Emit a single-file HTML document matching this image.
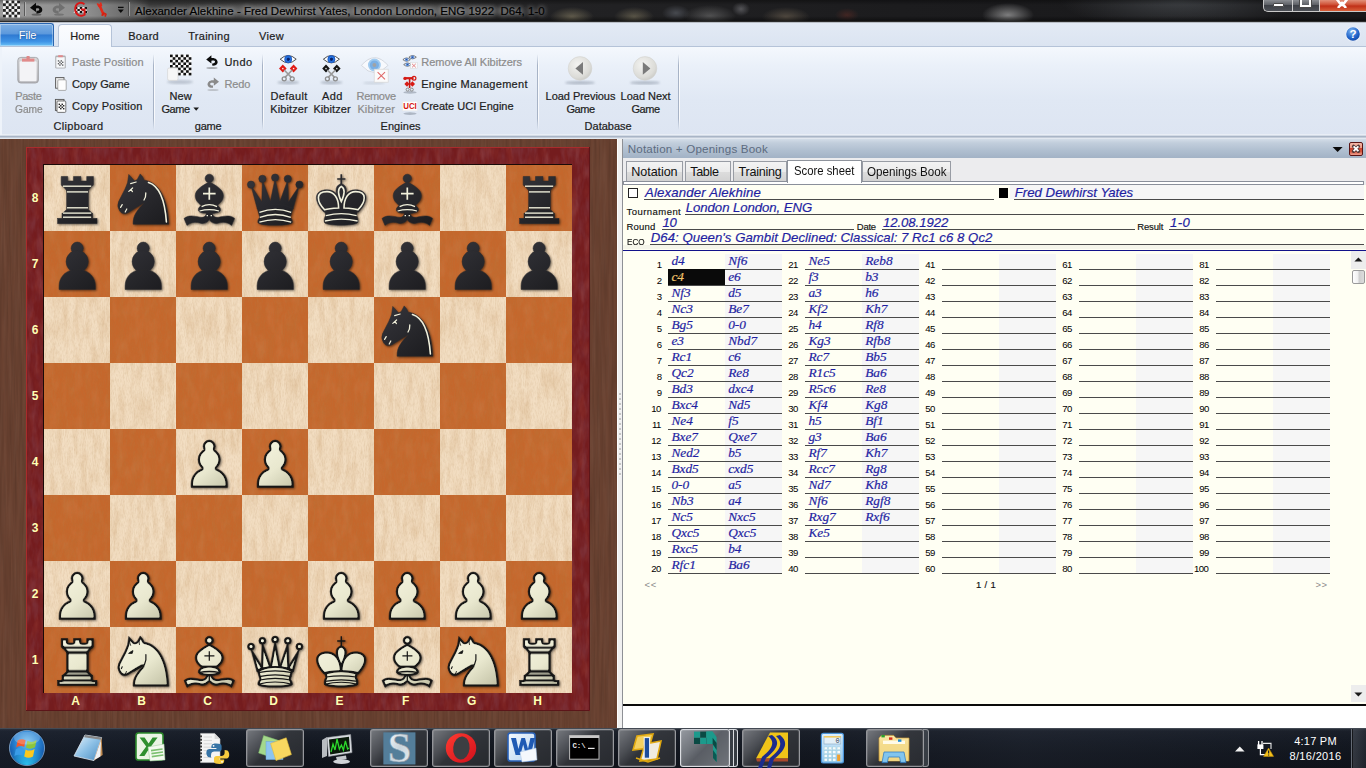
<!DOCTYPE html>
<html><head><meta charset="utf-8"><title>ChessBase</title>
<style>
html,body{margin:0;padding:0;}
body{width:1366px;height:768px;overflow:hidden;position:relative;background:#fff;font-family:"Liberation Sans",sans-serif;}
.t{position:absolute;white-space:pre;}
</style></head><body>
<svg width="0" height="0" style="position:absolute"><defs>
<linearGradient id="wg" gradientUnits="userSpaceOnUse" x1="14" y1="10" x2="54" y2="60"><stop offset="0" stop-color="#f7f6e2"/><stop offset="0.55" stop-color="#e9e8cf"/><stop offset="1" stop-color="#c3c2a6"/></linearGradient>
<linearGradient id="bg" gradientUnits="userSpaceOnUse" x1="14" y1="10" x2="54" y2="60"><stop offset="0" stop-color="#34343a"/><stop offset="1" stop-color="#1c1c1f"/></linearGradient>
<filter id="erode" x="-5%" y="-5%" width="110%" height="110%"><feGaussianBlur in="SourceAlpha" stdDeviation="0.8" result="b"/><feComponentTransfer in="b" result="m"><feFuncA type="linear" slope="10" intercept="-8.9"/></feComponentTransfer><feComposite in="SourceGraphic" in2="m" operator="in"/></filter>
</defs>
<symbol id="bp" viewBox="0 0 66 66"><g fill="url(#bg)" stroke="#2a2a2e" stroke-width="0.5"><circle cx="33.2" cy="17.2" r="6.1"/><circle cx="33.2" cy="30.6" r="11.1"/><path d="M15.1,58.4 L15.1,55 C15.1,46.5 20.6,40.6 28.8,38.7 L37.6,38.7 C45.8,40.6 51.4,46.5 51.4,55 L51.4,58.4 Z"/></g></symbol>
<symbol id="wp" viewBox="0 0 66 66"><g fill="#161616" stroke="#161616" stroke-width="0.5"><circle cx="33.2" cy="17.2" r="6.1"/><circle cx="33.2" cy="30.6" r="11.1"/><path d="M15.1,58.4 L15.1,55 C15.1,46.5 20.6,40.6 28.8,38.7 L37.6,38.7 C45.8,40.6 51.4,46.5 51.4,55 L51.4,58.4 Z"/></g><g filter="url(#erode)"><g fill="url(#wg)"><circle cx="33.2" cy="17.2" r="6.1"/><circle cx="33.2" cy="30.6" r="11.1"/><path d="M15.1,58.4 L15.1,55 C15.1,46.5 20.6,40.6 28.8,38.7 L37.6,38.7 C45.8,40.6 51.4,46.5 51.4,55 L51.4,58.4 Z"/></g></g></symbol>
<symbol id="br" viewBox="0 0 66 66"><g fill="url(#bg)" stroke="#2a2a2e" stroke-width="0.5"><path d="M17.2,11.5 L23.7,11.5 L23.7,16 L29.5,16 L29.5,11.5 L36.9,11.5 L36.9,16 L42.7,16 L42.7,11.5 L49.4,11.5 L49.4,19.5 Q49.4,20.8 48,20.8 L18.6,20.8 Q17.2,20.8 17.2,19.5 Z"/><path d="M18.6,20.8 L48,20.8 L44.3,25.6 L22.7,25.6 Z"/><rect x="22.7" y="25.6" width="21.6" height="18.8"/><path d="M22.7,44.4 L44.3,44.4 L48.3,48.4 L18.4,48.4 Z"/><rect x="18" y="48.4" width="30.6" height="4.9"/><rect x="13.6" y="53.3" width="39.4" height="5.3"/></g><path d="M19,21.2 L47.2,21.2" stroke="#f2f1dc" stroke-width="1.35" fill="none"/><path d="M23,26.9 L44,26.9" stroke="#f2f1dc" stroke-width="1.35" fill="none"/><path d="M23,42.8 L44,42.8" stroke="#f2f1dc" stroke-width="1.35" fill="none"/><path d="M19,48.1 L47.2,48.1" stroke="#f2f1dc" stroke-width="1.35" fill="none"/><path d="M19,52.2 L47.2,52.2" stroke="#f2f1dc" stroke-width="1.35" fill="none"/></symbol>
<symbol id="wr" viewBox="0 0 66 66"><g fill="#161616" stroke="#161616" stroke-width="0.5"><path d="M17.2,11.5 L23.7,11.5 L23.7,16 L29.5,16 L29.5,11.5 L36.9,11.5 L36.9,16 L42.7,16 L42.7,11.5 L49.4,11.5 L49.4,19.5 Q49.4,20.8 48,20.8 L18.6,20.8 Q17.2,20.8 17.2,19.5 Z"/><path d="M18.6,20.8 L48,20.8 L44.3,25.6 L22.7,25.6 Z"/><rect x="22.7" y="25.6" width="21.6" height="18.8"/><path d="M22.7,44.4 L44.3,44.4 L48.3,48.4 L18.4,48.4 Z"/><rect x="18" y="48.4" width="30.6" height="4.9"/><rect x="13.6" y="53.3" width="39.4" height="5.3"/></g><g filter="url(#erode)"><g fill="url(#wg)"><path d="M17.2,11.5 L23.7,11.5 L23.7,16 L29.5,16 L29.5,11.5 L36.9,11.5 L36.9,16 L42.7,16 L42.7,11.5 L49.4,11.5 L49.4,19.5 Q49.4,20.8 48,20.8 L18.6,20.8 Q17.2,20.8 17.2,19.5 Z"/><path d="M18.6,20.8 L48,20.8 L44.3,25.6 L22.7,25.6 Z"/><rect x="22.7" y="25.6" width="21.6" height="18.8"/><path d="M22.7,44.4 L44.3,44.4 L48.3,48.4 L18.4,48.4 Z"/><rect x="18" y="48.4" width="30.6" height="4.9"/><rect x="13.6" y="53.3" width="39.4" height="5.3"/></g></g><path d="M18,20.8 L48.6,20.8" stroke="#161616" stroke-width="1.2" fill="none"/><path d="M22.7,25.6 L44.3,25.6" stroke="#161616" stroke-width="1.2" fill="none"/><path d="M22.7,44.4 L44.3,44.4" stroke="#161616" stroke-width="1.2" fill="none"/><path d="M18.4,48.4 L48.3,48.4" stroke="#161616" stroke-width="1.2" fill="none"/><path d="M17,53.3 L49.6,53.3" stroke="#161616" stroke-width="1.2" fill="none"/></symbol>
<symbol id="bn" viewBox="0 0 66 66"><g fill="url(#bg)" stroke="#2a2a2e" stroke-width="0.5"><path d="M18.8,9.4 L24.4,15.8 Q26,15.4 27.2,14.6 L30.2,8.9 Q33,11.6 34.2,15.2 C45,16.3 57.8,28 58.8,59.2 L23.1,59.2 C22.7,50 28,44.2 34.4,37.8 C30,40.6 23,44.6 18,47.8 Q12.5,50.6 9.6,45.8 Q6.6,41.4 8.6,36.6 L14.8,24.4 Q16.6,20.4 17.6,17.6 Z"/></g><path d="M38.5,17.6 C47.5,20.4 54.6,32 56.4,57" stroke="#f2f1dc" fill="none" stroke-linecap="round" stroke-width="1.6"/><path d="M20.6,18.6 L26.2,17" stroke="#f2f1dc" fill="none" stroke-linecap="round" stroke-width="1.1"/><path d="M18.8,26.4 L22.6,23 M21,24.4 L22.4,26.6" stroke="#f2f1dc" fill="none" stroke-linecap="round" stroke-width="1.2"/><path d="M35.8,28 Q36,32 34,35" stroke="#f2f1dc" fill="none" stroke-linecap="round" stroke-width="1.3"/><path d="M10.6,42.4 L12.2,39.6" stroke="#f2f1dc" fill="none" stroke-linecap="round" stroke-width="1.2"/><path d="M15.2,47 L16.8,44" stroke="#f2f1dc" fill="none" stroke-linecap="round" stroke-width="1.2"/></symbol>
<symbol id="wn" viewBox="0 0 66 66"><g fill="#161616" stroke="#161616" stroke-width="0.5"><path d="M18.8,9.4 L24.4,15.8 Q26,15.4 27.2,14.6 L30.2,8.9 Q33,11.6 34.2,15.2 C45,16.3 57.8,28 58.8,59.2 L23.1,59.2 C22.7,50 28,44.2 34.4,37.8 C30,40.6 23,44.6 18,47.8 Q12.5,50.6 9.6,45.8 Q6.6,41.4 8.6,36.6 L14.8,24.4 Q16.6,20.4 17.6,17.6 Z"/></g><g filter="url(#erode)"><g fill="url(#wg)"><path d="M18.8,9.4 L24.4,15.8 Q26,15.4 27.2,14.6 L30.2,8.9 Q33,11.6 34.2,15.2 C45,16.3 57.8,28 58.8,59.2 L23.1,59.2 C22.7,50 28,44.2 34.4,37.8 C30,40.6 23,44.6 18,47.8 Q12.5,50.6 9.6,45.8 Q6.6,41.4 8.6,36.6 L14.8,24.4 Q16.6,20.4 17.6,17.6 Z"/></g></g><path d="M19.6,12.6 Q19.4,16 20.6,18.4 M29.6,12 Q28.6,15 29.4,17.6" stroke="#161616" fill="none" stroke-linecap="round" stroke-width="0.8"/><path d="M18.6,26.4 Q20.6,24.6 23,23.6 L22.2,26.4 Z" fill="#161616" stroke="#161616" stroke-width="0.8"/><path d="M35.9,27.6 Q36.6,33 34.4,37.8 C30,40.6 27,42 24,44" stroke="#161616" fill="none" stroke-linecap="round" stroke-width="1.2"/><path d="M11.4,41.6 L12.2,39.8" stroke="#161616" fill="none" stroke-linecap="round" stroke-width="1.1"/><path d="M15.4,46.6 Q16.2,45.6 16.4,44.6" stroke="#161616" fill="none" stroke-linecap="round" stroke-width="1"/></symbol>
<symbol id="bb" viewBox="0 0 66 66"><g fill="url(#bg)" stroke="#2a2a2e" stroke-width="0.5"><circle cx="33.3" cy="13.4" r="4.2"/><path d="M33.3,16.8 C28,20 19.2,24 19.2,30.6 C19.2,35 22,38 25.4,40.6 L41.2,40.6 C44.6,38 47.4,35 47.4,30.6 C47.4,24 38.6,20 33.3,16.8 Z"/><path d="M22.3,44.8 C22.3,36.8 44.5,36.8 44.5,44.8 C45,50 21.8,50 22.3,44.8 Z"/><path d="M8,53.4 C13,49.4 19,51.4 24,52.2 C28,52.7 30.2,51.4 30.6,47.6 L36,47.6 C36.4,51.4 38.6,52.7 42.6,52.2 C47.6,51.4 53.6,49.4 58.6,53.4 L55.6,60.4 C50,56.2 46,57.2 42,58.2 C38,59 35,57.6 33.3,54.6 C31.6,57.6 28.6,59 24.6,58.2 C20.6,57.2 16.6,56.2 11,60.4 Z"/></g><path d="M33.3,22.6 L33.3,34.8 M27,28.7 L39.6,28.7" stroke="#f2f1dc" fill="none" stroke-width="1.7"/><path d="M25.6,41.6 Q33.3,37.6 41,41.6" stroke="#f2f1dc" fill="none" stroke-width="1.2"/><path d="M23.6,46 Q33.3,43.4 43,46" stroke="#f2f1dc" fill="none" stroke-width="1.2"/><path d="M30.6,50.6 L32,50.6 M34.6,50.6 L36,50.6" stroke="#f2f1dc" fill="none" stroke-width="1.2"/></symbol>
<symbol id="wb" viewBox="0 0 66 66"><g fill="#161616" stroke="#161616" stroke-width="0.5"><circle cx="33.3" cy="13.4" r="4.2"/><path d="M33.3,16.8 C28,20 19.2,24 19.2,30.6 C19.2,35 22,38 25.4,40.6 L41.2,40.6 C44.6,38 47.4,35 47.4,30.6 C47.4,24 38.6,20 33.3,16.8 Z"/><path d="M8,53.4 C13,49.4 19,51.4 24,52.2 C28,52.7 30.2,51.4 30.6,47.6 L36,47.6 C36.4,51.4 38.6,52.7 42.6,52.2 C47.6,51.4 53.6,49.4 58.6,53.4 L55.6,60.4 C50,56.2 46,57.2 42,58.2 C38,59 35,57.6 33.3,54.6 C31.6,57.6 28.6,59 24.6,58.2 C20.6,57.2 16.6,56.2 11,60.4 Z"/><path d="M22.3,44.8 C22.3,36.8 44.5,36.8 44.5,44.8 C45,50 21.8,50 22.3,44.8 Z"/></g><g filter="url(#erode)"><g fill="url(#wg)"><circle cx="33.3" cy="13.4" r="4.2"/></g></g><g filter="url(#erode)"><g fill="url(#wg)"><path d="M33.3,16.8 C28,20 19.2,24 19.2,30.6 C19.2,35 22,38 25.4,40.6 L41.2,40.6 C44.6,38 47.4,35 47.4,30.6 C47.4,24 38.6,20 33.3,16.8 Z"/></g></g><g filter="url(#erode)"><g fill="url(#wg)"><path d="M8,53.4 C13,49.4 19,51.4 24,52.2 C28,52.7 30.2,51.4 30.6,47.6 L36,47.6 C36.4,51.4 38.6,52.7 42.6,52.2 C47.6,51.4 53.6,49.4 58.6,53.4 L55.6,60.4 C50,56.2 46,57.2 42,58.2 C38,59 35,57.6 33.3,54.6 C31.6,57.6 28.6,59 24.6,58.2 C20.6,57.2 16.6,56.2 11,60.4 Z"/></g></g><g filter="url(#erode)"><g fill="url(#wg)"><path d="M22.3,44.8 C22.3,36.8 44.5,36.8 44.5,44.8 C45,50 21.8,50 22.3,44.8 Z"/></g></g><path d="M33.3,24.2 L33.3,33.8 M28.4,28.8 L38.4,28.8" stroke="#161616" fill="none" stroke-width="1.2"/><path d="M22.8,45.6 Q33.3,43.4 43.8,45.6" stroke="#161616" fill="none" stroke-width="1.25"/><path d="M33.3,49 L33.3,55" stroke="#161616" fill="none" stroke-width="1.3"/></symbol>
<symbol id="bq" viewBox="0 0 66 66"><g fill="url(#bg)" stroke="#2a2a2e" stroke-width="0.5"><path d="M15.3,44 L9,20.5 L19.8,36.8 L20.4,15 L28.4,36.2 L33.1,13.6 L37.9,36.2 L45.8,15 L46.5,36.8 L57.4,20.5 L51.1,44 Z"/><path d="M15.3,43.4 Q33.1,34.8 51.1,43.4 L50.2,46 L48.4,52.4 C49.6,53.6 50.6,55.4 50.3,57.4 C49.6,61.2 16.6,61.2 15.9,57.4 C15.6,55.4 16.6,53.6 17.8,52.4 L16,46 Z"/><circle cx="9.0" cy="19.6" r="3.6"/><circle cx="20.4" cy="13.8" r="3.6"/><circle cx="33.1" cy="12.6" r="3.6"/><circle cx="45.8" cy="13.8" r="3.6"/><circle cx="57.4" cy="19.6" r="3.6"/></g><path d="M17.4,47.4 Q33.3,41.4 49.2,47.4" stroke="#f2f1dc" fill="none" stroke-width="1.3"/><path d="M17.8,52.4 Q33.3,46.6 48.8,52.4" stroke="#f2f1dc" fill="none" stroke-width="1.3"/><path d="M17.4,57.2 Q33.3,52 49.2,57.2" stroke="#f2f1dc" fill="none" stroke-width="1.3"/></symbol>
<symbol id="wq" viewBox="0 0 66 66"><g fill="#161616" stroke="#161616" stroke-width="0.5"><path d="M8.4,20.5 L15,45 L21.4,41.4 Z"/><path d="M20.1,14.4 L19.2,42.6 L29.4,41 Z"/><path d="M33.1,12.8 L27.8,41.4 L38.6,41.4 Z"/><path d="M46.1,14.4 L37,41 L47.2,42.6 Z"/><path d="M58,20.5 L45,41.4 L51.4,45 Z"/><path d="M15.3,43.4 Q33.1,34.8 51.1,43.4 L50.2,46 L48.4,52.4 C49.6,53.6 50.6,55.4 50.3,57.4 C49.6,61.2 16.6,61.2 15.9,57.4 C15.6,55.4 16.6,53.6 17.8,52.4 L16,46 Z"/><circle cx="9.0" cy="19.6" r="3.5"/><circle cx="20.4" cy="13.8" r="3.5"/><circle cx="33.1" cy="12.6" r="3.5"/><circle cx="45.8" cy="13.8" r="3.5"/><circle cx="57.4" cy="19.6" r="3.5"/></g><g filter="url(#erode)"><g fill="url(#wg)"><path d="M8.4,20.5 L15,45 L21.4,41.4 Z"/></g></g><g filter="url(#erode)"><g fill="url(#wg)"><path d="M20.1,14.4 L19.2,42.6 L29.4,41 Z"/></g></g><g filter="url(#erode)"><g fill="url(#wg)"><path d="M33.1,12.8 L27.8,41.4 L38.6,41.4 Z"/></g></g><g filter="url(#erode)"><g fill="url(#wg)"><path d="M46.1,14.4 L37,41 L47.2,42.6 Z"/></g></g><g filter="url(#erode)"><g fill="url(#wg)"><path d="M58,20.5 L45,41.4 L51.4,45 Z"/></g></g><g filter="url(#erode)"><g fill="url(#wg)"><path d="M15.3,43.4 Q33.1,34.8 51.1,43.4 L50.2,46 L48.4,52.4 C49.6,53.6 50.6,55.4 50.3,57.4 C49.6,61.2 16.6,61.2 15.9,57.4 C15.6,55.4 16.6,53.6 17.8,52.4 L16,46 Z"/></g></g><g filter="url(#erode)"><g fill="url(#wg)"><circle cx="9.0" cy="19.6" r="3.5"/></g></g><g filter="url(#erode)"><g fill="url(#wg)"><circle cx="20.4" cy="13.8" r="3.5"/></g></g><g filter="url(#erode)"><g fill="url(#wg)"><circle cx="33.1" cy="12.6" r="3.5"/></g></g><g filter="url(#erode)"><g fill="url(#wg)"><circle cx="45.8" cy="13.8" r="3.5"/></g></g><g filter="url(#erode)"><g fill="url(#wg)"><circle cx="57.4" cy="19.6" r="3.5"/></g></g><path d="M15.4,43.8 Q33.1,35.4 51,43.8" stroke="#161616" fill="none" stroke-width="1.3"/><path d="M16.2,45.6 Q33.1,42 50.2,45.6" stroke="#161616" fill="none" stroke-width="1.25"/><path d="M17.2,49.6 Q33.1,46 49.2,49.6" stroke="#161616" fill="none" stroke-width="1.25"/><path d="M17.8,53 Q33.1,49.8 48.6,53" stroke="#161616" fill="none" stroke-width="1.25"/><path d="M16,57.4 Q33.1,52.6 50.2,57.4" stroke="#161616" fill="none" stroke-width="1.1"/></symbol>
<symbol id="bk" viewBox="0 0 66 66"><g fill="url(#bg)" stroke="#2a2a2e" stroke-width="0.5"><path d="M33.8,45 C24,45.2 18.6,46.2 16,47.2 C10.6,41.8 8.4,36.4 8.4,32.6 C8.4,27.4 13,24.8 19,24.8 C27.6,24.8 33.8,32 33.8,45 Z"/><path d="M32.6,45 C42.4,45.2 47.8,46.2 50.4,47.2 C55.8,41.8 58,36.4 58,32.6 C58,27.4 53.4,24.8 47.4,24.8 C38.8,24.8 32.6,32 32.6,45 Z"/><path d="M33.2,18.6 C25.6,21 27,29 33.2,40.4 C39.4,29 40.8,21 33.2,18.6 Z"/><path d="M16.6,45.8 Q33.1,40.6 49.8,45.8 L48.4,50.4 C49.8,52 50.4,55 49.9,57.2 C49.2,61.2 17,61.2 16.3,57.2 C15.8,55 16.4,52 17.8,50.4 Z"/></g><path d="M33.3,9.2 L33.3,19 M29.2,14 L37.4,14" stroke="#2a2a2e" stroke-width="1.7" fill="none"/><path d="M30.6,43 C23,43.4 19,44 16.6,44.8 C12.4,40.6 10.4,36 10.4,32.8 C10.4,28.6 14,26.6 19,26.6 C26,26.6 30.6,33 30.6,43 Z" stroke="#f2f1dc" fill="none" stroke-width="1.6"/><path d="M36,43 C43.6,43.4 47.6,44 50,44.8 C54.2,40.6 56.2,36 56.2,32.8 C56.2,28.6 52.6,26.6 47.6,26.6 C40.6,26.6 36,33 36,43 Z" stroke="#f2f1dc" fill="none" stroke-width="1.6"/><path d="M33.3,21.4 C29.4,23.6 29.6,28.6 33.3,36.6 C37,28.6 37.2,23.6 33.3,21.4 Z" stroke="#f2f1dc" fill="none" stroke-width="1.6"/><path d="M18,50.6 Q33.3,46.6 48.6,50.6" stroke="#f2f1dc" fill="none" stroke-width="1.3"/><path d="M17,56 Q33.3,52.4 49.6,56" stroke="#f2f1dc" fill="none" stroke-width="1.3"/></symbol>
<symbol id="wk" viewBox="0 0 66 66"><g fill="#161616" stroke="#161616" stroke-width="0.5"><path d="M33.8,45 C24,45.2 18.6,46.2 16,47.2 C10.6,41.8 8.4,36.4 8.4,32.6 C8.4,27.4 13,24.8 19,24.8 C27.6,24.8 33.8,32 33.8,45 Z"/><path d="M32.6,45 C42.4,45.2 47.8,46.2 50.4,47.2 C55.8,41.8 58,36.4 58,32.6 C58,27.4 53.4,24.8 47.4,24.8 C38.8,24.8 32.6,32 32.6,45 Z"/><path d="M33.2,18.6 C25.6,21 27,29 33.2,40.4 C39.4,29 40.8,21 33.2,18.6 Z"/><path d="M16.6,45.8 Q33.1,40.6 49.8,45.8 L48.4,50.4 C49.8,52 50.4,55 49.9,57.2 C49.2,61.2 17,61.2 16.3,57.2 C15.8,55 16.4,52 17.8,50.4 Z"/></g><g filter="url(#erode)"><g fill="url(#wg)"><path d="M33.8,45 C24,45.2 18.6,46.2 16,47.2 C10.6,41.8 8.4,36.4 8.4,32.6 C8.4,27.4 13,24.8 19,24.8 C27.6,24.8 33.8,32 33.8,45 Z"/></g></g><g filter="url(#erode)"><g fill="url(#wg)"><path d="M32.6,45 C42.4,45.2 47.8,46.2 50.4,47.2 C55.8,41.8 58,36.4 58,32.6 C58,27.4 53.4,24.8 47.4,24.8 C38.8,24.8 32.6,32 32.6,45 Z"/></g></g><g filter="url(#erode)"><g fill="url(#wg)"><path d="M33.2,18.6 C25.6,21 27,29 33.2,40.4 C39.4,29 40.8,21 33.2,18.6 Z"/></g></g><g filter="url(#erode)"><g fill="url(#wg)"><path d="M16.6,45.8 Q33.1,40.6 49.8,45.8 L48.4,50.4 C49.8,52 50.4,55 49.9,57.2 C49.2,61.2 17,61.2 16.3,57.2 C15.8,55 16.4,52 17.8,50.4 Z"/></g></g><path d="M33.3,9.2 L33.3,19 M29.2,14 L37.4,14" stroke="#161616" fill="none" stroke-width="1.4"/><path d="M18,50 Q33.1,47.8 48.2,50" stroke="#161616" fill="none" stroke-width="1.25"/><path d="M17,54.4 Q33.1,51.2 49.4,54.4" stroke="#161616" fill="none" stroke-width="1.25"/><path d="M16.4,57.4 Q33.1,53 49.8,57.4" stroke="#161616" fill="none" stroke-width="1.1"/><path d="M33.1,38 L33.1,43.4" stroke="#161616" fill="none" stroke-width="1.3"/></symbol>
</svg>
<svg width="617" height="589" style="position:absolute;left:0;top:139px">
<defs>
<filter id="fwood" x="0" y="0" width="100%" height="100%"><feTurbulence type="fractalNoise" baseFrequency="0.35 0.012" numOctaves="3" seed="7"/><feColorMatrix type="matrix" values="0 0 0 0 0  0 0 0 0 0  0 0 0 0 0  1.6 0 0 0 -0.55"/></filter>
<filter id="fwoodl" x="0" y="0" width="100%" height="100%"><feTurbulence type="fractalNoise" baseFrequency="0.3 0.015" numOctaves="2" seed="11"/><feColorMatrix type="matrix" values="0 0 0 0 1  0 0 0 0 0.9  0 0 0 0 0.8  1.5 0 0 0 -0.6"/></filter>
<filter id="fred" x="0" y="0" width="100%" height="100%"><feTurbulence type="fractalNoise" baseFrequency="0.16 0.05" numOctaves="3" seed="5"/><feColorMatrix type="matrix" values="0 0 0 0 0.2  0 0 0 0 0.03  0 0 0 0 0.04  2.2 0 0 0 -0.78"/></filter>
<filter id="fredl" x="0" y="0" width="100%" height="100%"><feTurbulence type="fractalNoise" baseFrequency="0.14 0.05" numOctaves="3" seed="9"/><feColorMatrix type="matrix" values="0 0 0 0 0.8  0 0 0 0 0.22  0 0 0 0 0.12  2.2 0 0 0 -0.95"/></filter>
<filter id="fsq" x="0" y="0" width="100%" height="100%"><feTurbulence type="fractalNoise" baseFrequency="0.16 0.035" numOctaves="3" seed="2"/><feColorMatrix type="matrix" values="0 0 0 0 0.45  0 0 0 0 0.2  0 0 0 0 0.05  1.2 0 0 0 -0.45"/></filter>
<filter id="fsql" x="0" y="0" width="100%" height="100%"><feTurbulence type="fractalNoise" baseFrequency="0.12 0.05" numOctaves="3" seed="4"/><feColorMatrix type="matrix" values="0 0 0 0 1  0 0 0 0 0.95  0 0 0 0 0.85  1.2 0 0 0 -0.5"/></filter>
<filter id="ffine" x="0" y="0" width="100%" height="100%"><feTurbulence type="fractalNoise" baseFrequency="0.9 0.25" numOctaves="2" seed="8"/><feColorMatrix type="matrix" values="0 0 0 0 0.4  0 0 0 0 0.22  0 0 0 0 0.08  1.4 0 0 0 -0.55"/></filter>
</defs>
<rect width="617" height="589" fill="#6a4231"/>
<rect width="617" height="589" filter="url(#fwood)" opacity="0.15"/>
<rect width="617" height="589" filter="url(#fwoodl)" opacity="0.06"/>
<rect x="26" y="8" width="564" height="564" fill="#741c1e"/>
<rect x="26" y="8" width="564" height="564" filter="url(#fred)" opacity="0.85"/>
<rect x="26" y="8" width="564" height="564" filter="url(#fredl)" opacity="0.14"/>
<rect x="26.5" y="8.5" width="563" height="563" fill="none" stroke="#a82c2c" stroke-width="1"/>
<path d="M26,571.5 L589.5,571.5 L589.5,8" fill="none" stroke="#5c1519" stroke-width="1"/>
<rect x="43" y="25" width="529" height="529" fill="#1a0a08"/>
<rect x="44" y="26" width="528" height="528" fill="#f2ddc1"/>
<rect x="110" y="26" width="66" height="66" fill="#c5672c"/>
<rect x="242" y="26" width="66" height="66" fill="#c5672c"/>
<rect x="374" y="26" width="66" height="66" fill="#c5672c"/>
<rect x="506" y="26" width="66" height="66" fill="#c5672c"/>
<rect x="44" y="92" width="66" height="66" fill="#c5672c"/>
<rect x="176" y="92" width="66" height="66" fill="#c5672c"/>
<rect x="308" y="92" width="66" height="66" fill="#c5672c"/>
<rect x="440" y="92" width="66" height="66" fill="#c5672c"/>
<rect x="110" y="158" width="66" height="66" fill="#c5672c"/>
<rect x="242" y="158" width="66" height="66" fill="#c5672c"/>
<rect x="374" y="158" width="66" height="66" fill="#c5672c"/>
<rect x="506" y="158" width="66" height="66" fill="#c5672c"/>
<rect x="44" y="224" width="66" height="66" fill="#c5672c"/>
<rect x="176" y="224" width="66" height="66" fill="#c5672c"/>
<rect x="308" y="224" width="66" height="66" fill="#c5672c"/>
<rect x="440" y="224" width="66" height="66" fill="#c5672c"/>
<rect x="110" y="290" width="66" height="66" fill="#c5672c"/>
<rect x="242" y="290" width="66" height="66" fill="#c5672c"/>
<rect x="374" y="290" width="66" height="66" fill="#c5672c"/>
<rect x="506" y="290" width="66" height="66" fill="#c5672c"/>
<rect x="44" y="356" width="66" height="66" fill="#c5672c"/>
<rect x="176" y="356" width="66" height="66" fill="#c5672c"/>
<rect x="308" y="356" width="66" height="66" fill="#c5672c"/>
<rect x="440" y="356" width="66" height="66" fill="#c5672c"/>
<rect x="110" y="422" width="66" height="66" fill="#c5672c"/>
<rect x="242" y="422" width="66" height="66" fill="#c5672c"/>
<rect x="374" y="422" width="66" height="66" fill="#c5672c"/>
<rect x="506" y="422" width="66" height="66" fill="#c5672c"/>
<rect x="44" y="488" width="66" height="66" fill="#c5672c"/>
<rect x="176" y="488" width="66" height="66" fill="#c5672c"/>
<rect x="308" y="488" width="66" height="66" fill="#c5672c"/>
<rect x="440" y="488" width="66" height="66" fill="#c5672c"/>
<rect x="44" y="26" width="528" height="528" filter="url(#fsq)" opacity="0.34"/>
<rect x="44" y="26" width="528" height="528" filter="url(#fsql)" opacity="0.1"/>
<rect x="44" y="26" width="528" height="528" filter="url(#ffine)" opacity="0.22"/>
</svg>
<div class="t" style="left:31.66px;top:192.44px;font:bold 12px Liberation Sans;line-height:12px;color:#ffffb4;">8</div>
<div class="t" style="left:31.66px;top:258.44px;font:bold 12px Liberation Sans;line-height:12px;color:#ffffb4;">7</div>
<div class="t" style="left:31.66px;top:324.44px;font:bold 12px Liberation Sans;line-height:12px;color:#ffffb4;">6</div>
<div class="t" style="left:31.66px;top:390.44px;font:bold 12px Liberation Sans;line-height:12px;color:#ffffb4;">5</div>
<div class="t" style="left:31.66px;top:456.44px;font:bold 12px Liberation Sans;line-height:12px;color:#ffffb4;">4</div>
<div class="t" style="left:31.66px;top:522.44px;font:bold 12px Liberation Sans;line-height:12px;color:#ffffb4;">3</div>
<div class="t" style="left:31.66px;top:588.44px;font:bold 12px Liberation Sans;line-height:12px;color:#ffffb4;">2</div>
<div class="t" style="left:31.66px;top:654.44px;font:bold 12px Liberation Sans;line-height:12px;color:#ffffb4;">1</div>
<div class="t" style="left:71.27px;top:694.84px;font:bold 12px Liberation Sans;line-height:12px;color:#ffffb4;">A</div>
<div class="t" style="left:137.27px;top:694.84px;font:bold 12px Liberation Sans;line-height:12px;color:#ffffb4;">B</div>
<div class="t" style="left:203.27px;top:694.84px;font:bold 12px Liberation Sans;line-height:12px;color:#ffffb4;">C</div>
<div class="t" style="left:269.27px;top:694.84px;font:bold 12px Liberation Sans;line-height:12px;color:#ffffb4;">D</div>
<div class="t" style="left:335.60px;top:694.84px;font:bold 12px Liberation Sans;line-height:12px;color:#ffffb4;">E</div>
<div class="t" style="left:401.93px;top:694.84px;font:bold 12px Liberation Sans;line-height:12px;color:#ffffb4;">F</div>
<div class="t" style="left:466.93px;top:694.84px;font:bold 12px Liberation Sans;line-height:12px;color:#ffffb4;">G</div>
<div class="t" style="left:533.27px;top:694.84px;font:bold 12px Liberation Sans;line-height:12px;color:#ffffb4;">H</div>
<svg width="528" height="528" style="position:absolute;left:44px;top:165px;filter:drop-shadow(1.6px 1.6px 0.8px rgba(0,0,0,0.55))">
<use href="#br" x="0" y="0" width="66" height="66"/>
<use href="#bn" x="66" y="0" width="66" height="66"/>
<use href="#bb" x="132" y="0" width="66" height="66"/>
<use href="#bq" x="198" y="0" width="66" height="66"/>
<use href="#bk" x="264" y="0" width="66" height="66"/>
<use href="#bb" x="330" y="0" width="66" height="66"/>
<use href="#br" x="462" y="0" width="66" height="66"/>
<use href="#bp" x="0" y="66" width="66" height="66"/>
<use href="#bp" x="66" y="66" width="66" height="66"/>
<use href="#bp" x="132" y="66" width="66" height="66"/>
<use href="#bp" x="198" y="66" width="66" height="66"/>
<use href="#bp" x="264" y="66" width="66" height="66"/>
<use href="#bp" x="330" y="66" width="66" height="66"/>
<use href="#bp" x="396" y="66" width="66" height="66"/>
<use href="#bp" x="462" y="66" width="66" height="66"/>
<use href="#bn" x="330" y="132" width="66" height="66"/>
<use href="#wp" x="132" y="264" width="66" height="66"/>
<use href="#wp" x="198" y="264" width="66" height="66"/>
<use href="#wp" x="0" y="396" width="66" height="66"/>
<use href="#wp" x="66" y="396" width="66" height="66"/>
<use href="#wp" x="264" y="396" width="66" height="66"/>
<use href="#wp" x="330" y="396" width="66" height="66"/>
<use href="#wp" x="396" y="396" width="66" height="66"/>
<use href="#wp" x="462" y="396" width="66" height="66"/>
<use href="#wr" x="0" y="462" width="66" height="66"/>
<use href="#wn" x="66" y="462" width="66" height="66"/>
<use href="#wb" x="132" y="462" width="66" height="66"/>
<use href="#wq" x="198" y="462" width="66" height="66"/>
<use href="#wk" x="264" y="462" width="66" height="66"/>
<use href="#wb" x="330" y="462" width="66" height="66"/>
<use href="#wn" x="396" y="462" width="66" height="66"/>
<use href="#wr" x="462" y="462" width="66" height="66"/>
</svg>
<div style="position:absolute;left:0px;top:0px;width:1366px;height:22px;background:radial-gradient(ellipse 22px 10px at 572px 17px, rgba(150,140,110,0.55), rgba(0,0,0,0) 100%),radial-gradient(ellipse 20px 10px at 634px 17px, rgba(150,140,110,0.5), rgba(0,0,0,0) 100%),radial-gradient(ellipse 14px 8px at 676px 13px, rgba(110,115,125,0.5), rgba(0,0,0,0) 100%),radial-gradient(ellipse 26px 11px at 710px 16px, rgba(120,120,120,0.55), rgba(0,0,0,0) 100%),radial-gradient(ellipse 9px 7px at 741px 9px, rgba(120,120,125,0.6), rgba(0,0,0,0) 100%),radial-gradient(ellipse 24px 10px at 786px 17px, rgba(130,115,95,0.5), rgba(0,0,0,0) 100%),radial-gradient(ellipse 12px 7px at 847px 15px, rgba(120,50,40,0.4), rgba(0,0,0,0) 100%),radial-gradient(ellipse 26px 12px at 1008px 15px, rgba(190,190,190,0.6), rgba(0,0,0,0) 100%),radial-gradient(ellipse 120px 30px at 1180px 0px, rgba(90,95,100,0.55), rgba(0,0,0,0) 100%),linear-gradient(90deg,#9c9c9c 0px,#8c8c8c 90px,#6a6a6a 128px,#3a3a3a 150px,#2a2a2a 400px,#222224 560px,#1c1c1e 900px,#18181a 1366px);"></div>
<div style="position:absolute;left:0px;top:0px;width:1366px;height:22px;background:linear-gradient(180deg,rgba(0,0,0,0.35) 0px,rgba(0,0,0,0) 5px,rgba(0,0,0,0) 16px,rgba(0,0,0,0.45) 21px,rgba(0,0,0,0.6) 22px);"></div>
<div style="position:absolute;left:0px;top:21px;width:1366px;height:1px;background:#2c2c2c;"></div>
<div style="position:absolute;left:0px;top:22px;width:1366px;height:1px;background:#b9bec6;"></div>
<div style="position:absolute;left:132px;top:3px;width:418px;height:16px;background:radial-gradient(ellipse 50% 50% at 50% 50%, rgba(190,190,190,0.42) 0%, rgba(175,175,175,0.36) 70%, rgba(150,150,150,0) 100%);filter:blur(2px);"></div>
<div class="t" style="left:135.00px;top:5.67px;font:11.5px Liberation Sans;line-height:11.5px;color:#000;letter-spacing:0.013px;text-shadow:0 0 4px rgba(255,255,255,0.55),0 0 7px rgba(255,255,255,0.4);-webkit-text-stroke:0.2px;">Alexander Alekhine - Fred Dewhirst Yates, London London, ENG 1922  D64, 1-0</div>
<svg width="132" height="22" style="position:absolute;left:0;top:0"><rect x="3" y="0.5" width="17" height="17" fill="#f4f4f4"/><rect x="5.83" y="0.50" width="2.83" height="2.83" fill="#222"/><rect x="11.49" y="0.50" width="2.83" height="2.83" fill="#222"/><rect x="17.15" y="0.50" width="2.83" height="2.83" fill="#222"/><rect x="3.00" y="3.33" width="2.83" height="2.83" fill="#222"/><rect x="8.66" y="3.33" width="2.83" height="2.83" fill="#222"/><rect x="14.32" y="3.33" width="2.83" height="2.83" fill="#222"/><rect x="5.83" y="6.16" width="2.83" height="2.83" fill="#222"/><rect x="11.49" y="6.16" width="2.83" height="2.83" fill="#222"/><rect x="17.15" y="6.16" width="2.83" height="2.83" fill="#222"/><rect x="3.00" y="8.99" width="2.83" height="2.83" fill="#222"/><rect x="8.66" y="8.99" width="2.83" height="2.83" fill="#222"/><rect x="14.32" y="8.99" width="2.83" height="2.83" fill="#222"/><rect x="5.83" y="11.82" width="2.83" height="2.83" fill="#222"/><rect x="11.49" y="11.82" width="2.83" height="2.83" fill="#222"/><rect x="17.15" y="11.82" width="2.83" height="2.83" fill="#222"/><rect x="3.00" y="14.65" width="2.83" height="2.83" fill="#222"/><rect x="8.66" y="14.65" width="2.83" height="2.83" fill="#222"/><rect x="14.32" y="14.65" width="2.83" height="2.83" fill="#222"/><path d="M24.5,2 L24.5,16" stroke="#5a5a5a" stroke-width="1"/><path d="M25.5,2 L25.5,16" stroke="#c8c8c8" stroke-width="1" opacity="0.6"/><path d="M30,7.8 L36,2.8 L36,5.6 C40.6,5.2 42.8,8 42.2,10.8 C41.6,13 39,13.6 36.4,13.4 L36.4,10.8 C38.4,10.9 39.4,10.4 39.2,9.2 C39,8.2 37.6,8.2 36,8.6 L36,12 Z" fill="#0a0a0a"/><ellipse cx="36.5" cy="14.6" rx="5" ry="1.2" fill="#000" opacity="0.35"/><path d="M65,7.8 L59,2.8 L59,5.6 C54.4,5.2 52.2,8 52.8,10.8 C53.4,13 56,13.6 58.6,13.4 L58.6,10.8 C56.6,10.9 55.6,10.4 55.8,9.2 C56,8.2 57.4,8.2 59,8.6 L59,12 Z" fill="#707070"/><ellipse cx="59" cy="14.6" rx="5" ry="1.2" fill="#000" opacity="0.2"/><path d="M73.5,12.8 L77,7 L85,7 L87.6,12.8 Z" fill="#f2f2f2"/><rect x="75.0" y="7.0" width="2.4" height="2" fill="#111"/><rect x="75.0" y="11.0" width="2.4" height="2" fill="#111"/><rect x="77.4" y="9.0" width="2.4" height="2" fill="#111"/><rect x="79.8" y="7.0" width="2.4" height="2" fill="#111"/><rect x="79.8" y="11.0" width="2.4" height="2" fill="#111"/><rect x="82.2" y="9.0" width="2.4" height="2" fill="#111"/><rect x="84.6" y="7.0" width="2.4" height="2" fill="#111"/><rect x="84.6" y="11.0" width="2.4" height="2" fill="#111"/><path d="M84.4,4.4 C82,1.6 76.6,2.2 75.4,7.4 C74.4,12.6 78,16.8 82.6,15.6 L84.6,14.6 L84.6,9.6 L80.8,9.6" fill="none" stroke="#d81818" stroke-width="2"/><path d="M99.6,5.4 L103.4,14.2" fill="none" stroke="#e22a1a" stroke-width="2.6" stroke-linecap="round"/><path d="M97.4,3.4 L99,6.4 L101.4,5.4 L100.4,2.4" fill="none" stroke="#e22a1a" stroke-width="1.7" stroke-linejoin="round"/><path d="M101.8,15.8 L103.6,13 L106,14.2 L105,16.6" fill="none" stroke="#d42010" stroke-width="1.6" stroke-linejoin="round"/><path d="M118,7.4 L123.6,7.4" stroke="#0a0a0a" stroke-width="1.3"/><path d="M117.8,9.6 L123.8,9.6 L120.8,13 Z" fill="#0a0a0a"/><path d="M128.5,2 L128.5,16" stroke="#4a4a4a" stroke-width="1"/><path d="M129.5,2 L129.5,16" stroke="#b8b8b8" stroke-width="1" opacity="0.6"/></svg>
<div style="position:absolute;left:1263px;top:0px;width:103px;height:12px;border:1px solid #c9c9c9;border-top:none;border-right:none;border-radius:0 0 0 5px;background:linear-gradient(180deg,#8a8d92 0%,#5b5e64 45%,#3e4147 50%,#4e5157 100%);box-sizing:border-box;"></div>
<div style="position:absolute;left:1292px;top:0px;width:1px;height:11px;background:#d0d0d0;"></div>
<div style="position:absolute;left:1319px;top:0px;width:1px;height:11px;background:#d0d0d0;"></div>
<div style="position:absolute;left:1320px;top:0px;width:46px;height:11px;background:linear-gradient(180deg,#e2907a 0%,#d0553a 40%,#c03018 55%,#d8603a 100%);"></div>
<div style="position:absolute;left:1273px;top:3px;width:11px;height:4px;background:#fff;border:1px solid #4a4a4a;box-sizing:border-box;border-radius:1px;"></div>
<div style="position:absolute;left:1300px;top:0px;width:11px;height:7px;border:2px solid #fff;border-top:none;box-sizing:border-box;outline:1px solid #4a4a4a;"></div>
<svg width="16" height="8" style="position:absolute;left:1334px;top:0"><path d="M2,-2 L8,6 M14,-2 L8,6 M4,8 L8,3 L12,8" stroke="#fff" stroke-width="2.6" fill="none"/></svg>
<div style="position:absolute;left:0px;top:23px;width:1366px;height:24px;background:linear-gradient(180deg,#e3eaf5 0%,#dbe4f1 100%);"></div>
<div style="position:absolute;left:0px;top:46px;width:1366px;height:1px;background:#b5c3d8;"></div>
<div style="position:absolute;left:0px;top:47px;width:1366px;height:88px;background:linear-gradient(180deg,#f4f8fd 0%,#eaf0f9 22%,#e0e8f4 60%,#dde5f2 100%);"></div>
<div style="position:absolute;left:0px;top:134px;width:1366px;height:1px;background:#e9eef6;"></div>
<div style="position:absolute;left:0px;top:135px;width:1366px;height:1px;background:#d3dbe6;"></div>
<div style="position:absolute;left:0px;top:136px;width:1366px;height:1px;background:#a9b5c6;"></div>
<div style="position:absolute;left:0px;top:137px;width:1366px;height:1px;background:#c3ccd9;"></div>
<div style="position:absolute;left:0px;top:138px;width:1366px;height:1px;background:#e2e8f0;"></div>
<div style="position:absolute;left:0px;top:47px;width:2px;height:88px;background:#eef3fa;"></div>
<div style="position:absolute;left:0px;top:23px;width:54px;height:23px;border-radius:0 3px 0 0;background:linear-gradient(180deg,#7fb0e4 0%,#5b98dc 45%,#2f7ad2 50%,#3f94e6 80%,#6cc2f6 100%);border:1px solid #2a66b0;border-left:none;border-bottom:none;box-sizing:border-box;box-shadow:inset 0 0 0 1px rgba(255,255,255,0.35);"></div>
<div class="t" style="left:18.70px;top:30.09px;font:11px Liberation Sans;line-height:11px;color:#fff;letter-spacing:0.019px;text-shadow:0 0 2px rgba(20,60,120,0.8);">File</div>
<div style="position:absolute;left:58px;top:24px;width:54px;height:23px;background:linear-gradient(180deg,#fbfcfe 0%,#f4f8fd 100%);border:1px solid #b5c3d8;border-bottom:none;border-radius:4px 4px 0 0;box-sizing:border-box;"></div>
<div class="t" style="left:70.20px;top:30.79px;font:11px Liberation Sans;line-height:11px;color:#1e1e1e;letter-spacing:0.064px;-webkit-text-stroke:0.22px;">Home</div>
<div class="t" style="left:128.20px;top:30.79px;font:11px Liberation Sans;line-height:11px;color:#1e1e1e;letter-spacing:0.289px;-webkit-text-stroke:0.22px;">Board</div>
<div class="t" style="left:188.20px;top:30.79px;font:11px Liberation Sans;line-height:11px;color:#1e1e1e;letter-spacing:0.283px;-webkit-text-stroke:0.22px;">Training</div>
<div class="t" style="left:259.00px;top:30.79px;font:11px Liberation Sans;line-height:11px;color:#1e1e1e;letter-spacing:0.339px;-webkit-text-stroke:0.22px;">View</div>
<svg width="18" height="18" style="position:absolute;left:1344px;top:25px"><defs><radialGradient id="hg" cx="0.4" cy="0.3" r="0.8"><stop offset="0" stop-color="#7db4f0"/><stop offset="0.6" stop-color="#1f62c8"/><stop offset="1" stop-color="#0d3c96"/></radialGradient></defs><circle cx="9" cy="9" r="7.4" fill="url(#hg)" stroke="#e8eef8" stroke-width="1.2"/><text x="9" y="13.2" font-family="Liberation Sans" font-weight="bold" font-size="11.5" fill="#fff" text-anchor="middle">?</text></svg>
<div style="position:absolute;left:153px;top:54px;width:1px;height:76px;background:linear-gradient(180deg,rgba(160,172,190,0) 0%,#a7b3c6 15%,#a7b3c6 85%,rgba(160,172,190,0) 100%);"></div>
<div style="position:absolute;left:154px;top:54px;width:1px;height:76px;background:linear-gradient(180deg,rgba(255,255,255,0) 0%,rgba(255,255,255,0.8) 15%,rgba(255,255,255,0.8) 85%,rgba(255,255,255,0) 100%);"></div>
<div style="position:absolute;left:262px;top:54px;width:1px;height:76px;background:linear-gradient(180deg,rgba(160,172,190,0) 0%,#a7b3c6 15%,#a7b3c6 85%,rgba(160,172,190,0) 100%);"></div>
<div style="position:absolute;left:263px;top:54px;width:1px;height:76px;background:linear-gradient(180deg,rgba(255,255,255,0) 0%,rgba(255,255,255,0.8) 15%,rgba(255,255,255,0.8) 85%,rgba(255,255,255,0) 100%);"></div>
<div style="position:absolute;left:537px;top:54px;width:1px;height:76px;background:linear-gradient(180deg,rgba(160,172,190,0) 0%,#a7b3c6 15%,#a7b3c6 85%,rgba(160,172,190,0) 100%);"></div>
<div style="position:absolute;left:538px;top:54px;width:1px;height:76px;background:linear-gradient(180deg,rgba(255,255,255,0) 0%,rgba(255,255,255,0.8) 15%,rgba(255,255,255,0.8) 85%,rgba(255,255,255,0) 100%);"></div>
<div style="position:absolute;left:678px;top:54px;width:1px;height:76px;background:linear-gradient(180deg,rgba(160,172,190,0) 0%,#a7b3c6 15%,#a7b3c6 85%,rgba(160,172,190,0) 100%);"></div>
<div style="position:absolute;left:679px;top:54px;width:1px;height:76px;background:linear-gradient(180deg,rgba(255,255,255,0) 0%,rgba(255,255,255,0.8) 15%,rgba(255,255,255,0.8) 85%,rgba(255,255,255,0) 100%);"></div>
<div class="t" style="left:15.20px;top:90.79px;font:11px Liberation Sans;line-height:11px;color:#8c8c8c;letter-spacing:-0.386px;-webkit-text-stroke:0.22px;">Paste</div>
<div class="t" style="left:14.70px;top:103.89px;font:11px Liberation Sans;line-height:11px;color:#8c8c8c;transform:scaleX(0.9281);transform-origin:0 0;-webkit-text-stroke:0.22px;">Game</div>
<div class="t" style="left:72.00px;top:56.69px;font:11px Liberation Sans;line-height:11px;color:#8c8c8c;letter-spacing:0.106px;-webkit-text-stroke:0.22px;">Paste Position</div>
<div class="t" style="left:72.00px;top:78.89px;font:11px Liberation Sans;line-height:11px;color:#1e1e1e;letter-spacing:-0.121px;-webkit-text-stroke:0.22px;">Copy Game</div>
<div class="t" style="left:72.00px;top:100.79px;font:11px Liberation Sans;line-height:11px;color:#1e1e1e;letter-spacing:0.210px;-webkit-text-stroke:0.22px;">Copy Position</div>
<div class="t" style="left:53.50px;top:120.79px;font:11px Liberation Sans;line-height:11px;color:#1e1e1e;letter-spacing:0.324px;-webkit-text-stroke:0.22px;">Clipboard</div>
<div class="t" style="left:169.40px;top:90.79px;font:11px Liberation Sans;line-height:11px;color:#1e1e1e;letter-spacing:0.198px;-webkit-text-stroke:0.22px;">New</div>
<div class="t" style="left:161.50px;top:103.89px;font:11px Liberation Sans;line-height:11px;color:#1e1e1e;letter-spacing:-0.439px;-webkit-text-stroke:0.22px;">Game</div>
<svg width="7" height="5" style="position:absolute;left:192.5px;top:107px"><path d="M0.4,0.4 L6,0.4 L3.2,3.8 Z" fill="#1a1a1a"/></svg>
<div class="t" style="left:224.40px;top:56.69px;font:11px Liberation Sans;line-height:11px;color:#1e1e1e;letter-spacing:0.476px;-webkit-text-stroke:0.22px;">Undo</div>
<div class="t" style="left:224.40px;top:78.89px;font:11px Liberation Sans;line-height:11px;color:#8c8c8c;letter-spacing:-0.124px;-webkit-text-stroke:0.22px;">Redo</div>
<div class="t" style="left:194.70px;top:120.79px;font:11px Liberation Sans;line-height:11px;color:#1e1e1e;letter-spacing:-0.179px;-webkit-text-stroke:0.22px;">game</div>
<div class="t" style="left:270.40px;top:90.79px;font:11px Liberation Sans;line-height:11px;color:#1e1e1e;letter-spacing:0.364px;-webkit-text-stroke:0.22px;">Default</div>
<div class="t" style="left:270.20px;top:103.89px;font:11px Liberation Sans;line-height:11px;color:#1e1e1e;letter-spacing:0.115px;-webkit-text-stroke:0.22px;">Kibitzer</div>
<div class="t" style="left:322.00px;top:90.79px;font:11px Liberation Sans;line-height:11px;color:#1e1e1e;letter-spacing:0.343px;-webkit-text-stroke:0.22px;">Add</div>
<div class="t" style="left:313.40px;top:103.89px;font:11px Liberation Sans;line-height:11px;color:#1e1e1e;letter-spacing:0.090px;-webkit-text-stroke:0.22px;">Kibitzer</div>
<div class="t" style="left:356.50px;top:90.79px;font:11px Liberation Sans;line-height:11px;color:#8c8c8c;letter-spacing:-0.293px;-webkit-text-stroke:0.22px;">Remove</div>
<div class="t" style="left:357.40px;top:103.89px;font:11px Liberation Sans;line-height:11px;color:#8c8c8c;letter-spacing:0.115px;-webkit-text-stroke:0.22px;">Kibitzer</div>
<div class="t" style="left:421.20px;top:56.69px;font:11px Liberation Sans;line-height:11px;color:#8c8c8c;letter-spacing:-0.004px;-webkit-text-stroke:0.22px;">Remove All Kibitzers</div>
<div class="t" style="left:421.20px;top:78.89px;font:11px Liberation Sans;line-height:11px;color:#1e1e1e;letter-spacing:0.299px;-webkit-text-stroke:0.22px;">Engine Management</div>
<div class="t" style="left:421.20px;top:100.79px;font:11px Liberation Sans;line-height:11px;color:#1e1e1e;letter-spacing:0.004px;-webkit-text-stroke:0.22px;">Create UCI Engine</div>
<div class="t" style="left:380.60px;top:120.79px;font:11px Liberation Sans;line-height:11px;color:#1e1e1e;letter-spacing:0.036px;-webkit-text-stroke:0.22px;">Engines</div>
<div class="t" style="left:545.60px;top:90.79px;font:11px Liberation Sans;line-height:11px;color:#1e1e1e;letter-spacing:-0.040px;-webkit-text-stroke:0.22px;">Load Previous</div>
<div class="t" style="left:566.40px;top:103.89px;font:11px Liberation Sans;line-height:11px;color:#1e1e1e;letter-spacing:-0.439px;-webkit-text-stroke:0.22px;">Game</div>
<div class="t" style="left:620.60px;top:90.79px;font:11px Liberation Sans;line-height:11px;color:#1e1e1e;letter-spacing:-0.016px;-webkit-text-stroke:0.22px;">Load Next</div>
<div class="t" style="left:631.40px;top:103.89px;font:11px Liberation Sans;line-height:11px;color:#1e1e1e;letter-spacing:-0.439px;-webkit-text-stroke:0.22px;">Game</div>
<div class="t" style="left:584.60px;top:120.79px;font:11px Liberation Sans;line-height:11px;color:#1e1e1e;letter-spacing:-0.011px;-webkit-text-stroke:0.22px;">Database</div>
<svg width="700" height="92" style="position:absolute;left:0;top:47px"><defs>
<linearGradient id="clipg" x1="0" y1="0" x2="0" y2="1"><stop offset="0" stop-color="#d8d8da"/><stop offset="1" stop-color="#b4b4b8"/></linearGradient>
<radialGradient id="btn" cx="0.4" cy="0.35" r="0.75"><stop offset="0" stop-color="#f4f4f2"/><stop offset="0.7" stop-color="#dcdcd8"/><stop offset="1" stop-color="#c4c4c0"/></radialGradient>
<radialGradient id="eyeb" cx="0.5" cy="0.5" r="0.5"><stop offset="0" stop-color="#0a1a50"/><stop offset="0.35" stop-color="#0a2a80"/><stop offset="0.5" stop-color="#2a78e0"/><stop offset="1" stop-color="#1858c8"/></radialGradient>
<filter id="soft"><feGaussianBlur stdDeviation="1.2"/></filter>
</defs><rect x="17.8" y="10.399999999999999" width="20.6" height="25.6" rx="3" fill="url(#clipg)" stroke="#9a9a9e" stroke-width="0.8"/><rect x="19.6" y="14.200000000000003" width="17" height="20" rx="1.2" fill="#f3f3f6"/><rect x="22" y="11.600000000000001" width="12.4" height="3" fill="#e28a8a"/><rect x="26.4" y="9" width="3.4" height="3.2" rx="1" fill="#d88"/><g opacity="0.75"><rect x="55.2" y="8.600000000000001" width="10.6" height="13" rx="1.4" fill="#9a9a9c"/><rect x="56.300000000000004" y="10.200000000000003" width="8.4" height="10.4" fill="#fbfbfb"/><rect x="58.2" y="8.200000000000003" width="4.6" height="2" fill="#d66"/><g fill="#333"><rect x="57.8" y="13.2" width="1.4" height="1.4" opacity="1"/><rect x="57.8" y="14.6" width="1.4" height="1.4" opacity="0"/><rect x="57.8" y="16.0" width="1.4" height="1.4" opacity="1"/><rect x="57.8" y="17.4" width="1.4" height="1.4" opacity="0"/><rect x="59.2" y="13.2" width="1.4" height="1.4" opacity="0"/><rect x="59.2" y="14.6" width="1.4" height="1.4" opacity="1"/><rect x="59.2" y="16.0" width="1.4" height="1.4" opacity="0"/><rect x="59.2" y="17.4" width="1.4" height="1.4" opacity="1"/><rect x="60.6" y="13.2" width="1.4" height="1.4" opacity="1"/><rect x="60.6" y="14.6" width="1.4" height="1.4" opacity="0"/><rect x="60.6" y="16.0" width="1.4" height="1.4" opacity="1"/><rect x="60.6" y="17.4" width="1.4" height="1.4" opacity="0"/><rect x="62.0" y="13.2" width="1.4" height="1.4" opacity="0"/><rect x="62.0" y="14.6" width="1.4" height="1.4" opacity="1"/><rect x="62.0" y="16.0" width="1.4" height="1.4" opacity="0"/><rect x="62.0" y="17.4" width="1.4" height="1.4" opacity="1"/></g></g><rect x="55.6" y="30.599999999999994" width="8.4" height="10.6" fill="#e8e8e8" stroke="#555" stroke-width="0.9"/><rect x="57.8" y="32.8" width="8.4" height="10.6" rx="1" fill="#fdfdfd" stroke="#8c8c8c" stroke-width="0.7"/><rect x="55.4" y="52.400000000000006" width="8.6" height="11" fill="#ddd" stroke="#555" stroke-width="0.9"/><rect x="57" y="54" width="8.8" height="11.4" rx="1" fill="#fdfdfd" stroke="#555" stroke-width="0.8"/><g fill="#222"><rect x="58.60" y="56.60" width="1.45" height="1.45" opacity="1"/><rect x="58.60" y="58.05" width="1.45" height="1.45" opacity="0"/><rect x="58.60" y="59.50" width="1.45" height="1.45" opacity="1"/><rect x="58.60" y="60.95" width="1.45" height="1.45" opacity="0"/><rect x="60.05" y="56.60" width="1.45" height="1.45" opacity="0"/><rect x="60.05" y="58.05" width="1.45" height="1.45" opacity="1"/><rect x="60.05" y="59.50" width="1.45" height="1.45" opacity="0"/><rect x="60.05" y="60.95" width="1.45" height="1.45" opacity="1"/><rect x="61.50" y="56.60" width="1.45" height="1.45" opacity="1"/><rect x="61.50" y="58.05" width="1.45" height="1.45" opacity="0"/><rect x="61.50" y="59.50" width="1.45" height="1.45" opacity="1"/><rect x="61.50" y="60.95" width="1.45" height="1.45" opacity="0"/><rect x="62.95" y="56.60" width="1.45" height="1.45" opacity="0"/><rect x="62.95" y="58.05" width="1.45" height="1.45" opacity="1"/><rect x="62.95" y="59.50" width="1.45" height="1.45" opacity="0"/><rect x="62.95" y="60.95" width="1.45" height="1.45" opacity="1"/></g><ellipse cx="180" cy="35" rx="13" ry="2" fill="#8a94a4" opacity="0.45" filter="url(#soft)"/><rect x="170" y="7.600000000000001" width="21.4" height="20.8" fill="#fbfbfb"/><g fill="#111"><rect x="170.00" y="7.60" width="2.67" height="2.60"/><rect x="170.00" y="12.80" width="2.67" height="2.60"/><rect x="170.00" y="18.00" width="2.67" height="2.60"/><rect x="170.00" y="23.20" width="2.67" height="2.60"/><rect x="172.68" y="10.20" width="2.67" height="2.60"/><rect x="172.68" y="15.40" width="2.67" height="2.60"/><rect x="172.68" y="20.60" width="2.67" height="2.60"/><rect x="172.68" y="25.80" width="2.67" height="2.60"/><rect x="175.35" y="7.60" width="2.67" height="2.60"/><rect x="175.35" y="12.80" width="2.67" height="2.60"/><rect x="175.35" y="18.00" width="2.67" height="2.60"/><rect x="175.35" y="23.20" width="2.67" height="2.60"/><rect x="178.03" y="10.20" width="2.67" height="2.60"/><rect x="178.03" y="15.40" width="2.67" height="2.60"/><rect x="178.03" y="20.60" width="2.67" height="2.60"/><rect x="178.03" y="25.80" width="2.67" height="2.60"/><rect x="180.70" y="7.60" width="2.67" height="2.60"/><rect x="180.70" y="12.80" width="2.67" height="2.60"/><rect x="180.70" y="18.00" width="2.67" height="2.60"/><rect x="180.70" y="23.20" width="2.67" height="2.60"/><rect x="183.38" y="10.20" width="2.67" height="2.60"/><rect x="183.38" y="15.40" width="2.67" height="2.60"/><rect x="183.38" y="20.60" width="2.67" height="2.60"/><rect x="183.38" y="25.80" width="2.67" height="2.60"/><rect x="186.05" y="7.60" width="2.67" height="2.60"/><rect x="186.05" y="12.80" width="2.67" height="2.60"/><rect x="186.05" y="18.00" width="2.67" height="2.60"/><rect x="186.05" y="23.20" width="2.67" height="2.60"/><rect x="188.72" y="10.20" width="2.67" height="2.60"/><rect x="188.72" y="15.40" width="2.67" height="2.60"/><rect x="188.72" y="20.60" width="2.67" height="2.60"/><rect x="188.72" y="25.80" width="2.67" height="2.60"/></g><rect x="167.6" y="21" width="10.4" height="12.4" rx="1.6" fill="#f6f6f6" stroke="#d0d0d0" stroke-width="0.6"/><path d="M0,4.4 L5.2,0 L5.2,2.8 C9.4,2.4 11.8,4.8 11.4,7.6 C11,9.8 8.6,10.6 6,10.4 L6,8.2 C8,8.3 9,7.6 8.8,6.4 C8.6,5.2 7,5.2 5.2,5.6 L5.2,8.4 Z" transform="translate(206.2,8.200000000000003)" fill="#0c0c0c"/><ellipse cx="212" cy="21" rx="5.6" ry="1.1" fill="#555" opacity="0.45"/><path d="M0,4.4 L5.2,0 L5.2,2.8 C9.4,2.4 11.8,4.8 11.4,7.6 C11,9.8 8.6,10.6 6,10.4 L6,8.2 C8,8.3 9,7.6 8.8,6.4 C8.6,5.2 7,5.2 5.2,5.6 L5.2,8.4 Z" transform="translate(219.0,30.400000000000006) scale(-1,1)" fill="#8a8a8a"/><ellipse cx="213" cy="43" rx="5.6" ry="1.1" fill="#777" opacity="0.35"/><ellipse cx="288.2" cy="35.599999999999994" rx="11" ry="1.8" fill="#7d8796" opacity="0.45" filter="url(#soft)"/><g opacity="1"><path d="M280.2,12.200000000000003 Q288.2,4.800000000000004 296.2,12.200000000000003 Q288.2,19.60000000000001 280.2,12.200000000000003 Z" fill="#fff" stroke="#222" stroke-width="0.8"/><circle cx="288.2" cy="12.200000000000003" r="3.85" fill="url(#eyeb)"/></g><path d="M282.8,17.599999999999994 L286.6,21.599999999999994 L282.8,25.599999999999994 L279.0,21.599999999999994 Z" fill="#e01a14"/><rect x="282.1" y="20.900000000000006" width="1.4" height="1.4" fill="#fff" opacity="0.9"/><path d="M293.59999999999997,17.599999999999994 L297.4,21.599999999999994 L293.59999999999997,25.599999999999994 L289.79999999999995,21.599999999999994 Z" fill="#e01a14"/><rect x="292.9" y="20.900000000000006" width="1.4" height="1.4" fill="#fff" opacity="0.9"/><path d="M284.2,23 L291.59999999999997,30.599999999999994 M292.2,23 L284.8,30.599999999999994" stroke="#9a9a9a" stroke-width="1.6"/><circle cx="284.2" cy="31.799999999999997" r="2" fill="none" stroke="#8e8e8e" stroke-width="1.3"/><circle cx="292.2" cy="31.799999999999997" r="2" fill="none" stroke="#8e8e8e" stroke-width="1.3"/><ellipse cx="331.4" cy="35.599999999999994" rx="11" ry="1.8" fill="#7d8796" opacity="0.45" filter="url(#soft)"/><g opacity="1"><path d="M323.4,12.200000000000003 Q331.4,4.800000000000004 339.4,12.200000000000003 Q331.4,19.60000000000001 323.4,12.200000000000003 Z" fill="#fff" stroke="#222" stroke-width="0.8"/><circle cx="331.4" cy="12.200000000000003" r="3.85" fill="url(#eyeb)"/></g><path d="M326.0,17.599999999999994 L329.8,21.599999999999994 L326.0,25.599999999999994 L322.2,21.599999999999994 Z" fill="#141414"/><rect x="325.3" y="20.900000000000006" width="1.4" height="1.4" fill="#fff" opacity="0.9"/><path d="M336.79999999999995,17.599999999999994 L340.59999999999997,21.599999999999994 L336.79999999999995,25.599999999999994 L332.99999999999994,21.599999999999994 Z" fill="#141414"/><rect x="336.09999999999997" y="20.900000000000006" width="1.4" height="1.4" fill="#fff" opacity="0.9"/><path d="M327.4,23 L334.79999999999995,30.599999999999994 M335.4,23 L328.0,30.599999999999994" stroke="#9a9a9a" stroke-width="1.6"/><circle cx="327.4" cy="31.799999999999997" r="2" fill="none" stroke="#8e8e8e" stroke-width="1.3"/><circle cx="335.4" cy="31.799999999999997" r="2" fill="none" stroke="#8e8e8e" stroke-width="1.3"/><ellipse cx="374" cy="36" rx="11" ry="1.6" fill="#9aa4b2" opacity="0.3" filter="url(#soft)"/><g opacity="0.8"><path d="M361.4,18.400000000000006 Q374.6,3 388,18.400000000000006 Q374.6,33 361.4,18.400000000000006 Z" fill="#fbfcfe" stroke="#c4c8d0" stroke-width="0.8"/><circle cx="374.4" cy="18" r="6.4" fill="#8fc2ee"/><circle cx="374.4" cy="18" r="4.6" fill="#5fa0e0"/><circle cx="374.4" cy="18" r="2" fill="#909090"/></g><rect x="374.2" y="22.200000000000003" width="14" height="13" fill="#fbfbfb" stroke="#d6d6d6" stroke-width="0.7"/><path d="M377.6,25.200000000000003 L385,32.400000000000006 M385,25.200000000000003 L377.6,32.400000000000006" stroke="#e06a6a" stroke-width="1.1"/><g opacity="0.75"><g opacity="1"><path d="M402.90000000000003,12.600000000000001 Q406.6,9.399999999999999 410.3,12.600000000000001 Q406.6,15.800000000000004 402.90000000000003,12.600000000000001 Z" fill="#fff" stroke="#222" stroke-width="0.8"/><circle cx="406.6" cy="12.600000000000001" r="1.66" fill="url(#eyeb)"/></g><g opacity="1"><path d="M408.90000000000003,10.200000000000003 Q412.6,7.0 416.3,10.200000000000003 Q412.6,13.400000000000006 408.90000000000003,10.200000000000003 Z" fill="#fff" stroke="#222" stroke-width="0.8"/><circle cx="412.6" cy="10.200000000000003" r="1.66" fill="url(#eyeb)"/></g><g opacity="1"><path d="M403.7,17.599999999999994 Q407.4,14.399999999999991 411.09999999999997,17.599999999999994 Q407.4,20.799999999999997 403.7,17.599999999999994 Z" fill="#fff" stroke="#222" stroke-width="0.8"/><circle cx="407.4" cy="17.599999999999994" r="1.66" fill="url(#eyeb)"/></g><rect x="410.6" y="15.399999999999999" width="6.6" height="6.2" fill="#fff" stroke="#ccc" stroke-width="0.5"/><path d="M412,16.799999999999997 L415.8,20.400000000000006 M415.8,16.799999999999997 L412,20.400000000000006" stroke="#e05050" stroke-width="0.9"/></g><ellipse cx="410" cy="45.400000000000006" rx="6.6" ry="1.3" fill="#7d8796" opacity="0.5"/><path d="M404.8,31.200000000000003 L413.6,31.200000000000003" stroke="#d41a14" stroke-width="2.2"/><circle cx="405" cy="31.400000000000006" r="1.7" fill="#d41a14"/><circle cx="414" cy="31.200000000000003" r="1.9" fill="none" stroke="#d41a14" stroke-width="1.2"/><path d="M409.6,32 L409.6,41" stroke="#c01814" stroke-width="1.6"/><path d="M407.0,34.2 L409.6,37 L407.0,39.8 L404.4,37 Z" fill="#d81a14"/><path d="M412.40000000000003,34.2 L415.00000000000006,37 L412.40000000000003,39.8 L409.8,37 Z" fill="#d81a14"/><circle cx="407.6" cy="42.599999999999994" r="1.5" fill="none" stroke="#8a8a8a" stroke-width="1"/><circle cx="411.8" cy="42.599999999999994" r="1.5" fill="none" stroke="#8a8a8a" stroke-width="1"/><ellipse cx="410" cy="66.6" rx="6.6" ry="1.3" fill="#7d8796" opacity="0.5"/><rect x="402.6" y="54.400000000000006" width="14.8" height="9.4" fill="#fdfdfd" stroke="#e6e6e6" stroke-width="0.5"/><text x="410" y="62.400000000000006" font-family="Liberation Sans" font-weight="bold" font-size="8.6" fill="#d8140e" text-anchor="middle" textLength="13.6" lengthAdjust="spacingAndGlyphs">UCI</text><ellipse cx="580" cy="35.8" rx="15" ry="1.8" fill="#8a94a4" opacity="0.55" filter="url(#soft)"/><circle cx="580" cy="21.400000000000006" r="11.8" fill="url(#btn)" stroke="#d4d4d0" stroke-width="0.6"/><path d="M575.4,21.400000000000006 L583,15 L583,27.799999999999997 Z" fill="#7a7a7a"/><ellipse cx="645" cy="35.8" rx="15" ry="1.8" fill="#8a94a4" opacity="0.55" filter="url(#soft)"/><circle cx="645" cy="21.400000000000006" r="11.8" fill="url(#btn)" stroke="#d4d4d0" stroke-width="0.6"/><path d="M650.4,21.400000000000006 L642.8,15 L642.8,27.799999999999997 Z" fill="#7a7a7a"/></svg>
<div style="position:absolute;left:617px;top:139px;width:6px;height:589px;background:#f0f0f0;"></div>
<div style="position:absolute;left:617px;top:139px;width:1px;height:589px;background:#fdfdfd;"></div>
<div style="position:absolute;left:622px;top:139px;width:1px;height:589px;background:#8e9095;"></div>
<div style="position:absolute;left:619px;top:393px;width:3px;height:85px;background:repeating-linear-gradient(180deg,#c4c4c4 0px,#c4c4c4 2px,#f6f6f6 2px,#f6f6f6 3px,rgba(240,240,240,0) 3px,rgba(240,240,240,0) 5px);width:2px;"></div>
<div style="position:absolute;left:623px;top:139px;width:743px;height:19px;background:linear-gradient(180deg,#d3dde8 0%,#c2cedc 20%,#b0bfd0 60%,#a2b2c5 100%);"></div>
<div class="t" style="left:627.70px;top:143.48px;font:11.6px Liberation Sans;line-height:11.6px;color:#5c6b80;letter-spacing:0.193px;">Notation + Openings Book</div>
<svg width="12" height="7" style="position:absolute;left:1332px;top:146px"><path d="M0.6,0.9 L10.6,0.9 L5.6,6 Z" fill="#0a0a0a"/></svg>
<div style="position:absolute;left:1349px;top:142px;width:14px;height:14px;box-sizing:border-box;border:1px solid #5a1414;border-radius:2px;background:linear-gradient(180deg,#f2b8a8 0%,#ee9c88 38%,#c8402c 42%,#d2523a 70%,#f0a090 100%);"></div>
<svg width="14" height="14" style="position:absolute;left:1349px;top:142px"><path d="M4.6,4.4 L9.4,9.2 M9.4,4.4 L4.6,9.2" stroke="#503838" stroke-width="3.4" stroke-linecap="round"/><path d="M4.6,4.4 L9.4,9.2 M9.4,4.4 L4.6,9.2" stroke="#fff" stroke-width="1.9" stroke-linecap="butt"/></svg>
<div style="position:absolute;left:623px;top:158px;width:743px;height:23px;background:#ececee;"></div>
<div style="position:absolute;left:623px;top:181px;width:741px;height:4px;box-sizing:border-box;border:1px solid #8a8f9a;background:#fff;"></div>
<div style="position:absolute;left:1364px;top:181px;width:2px;height:4px;background:#ececee;"></div>
<div style="position:absolute;left:625.5px;top:161px;width:57.5px;height:20px;box-sizing:border-box;border:1px solid #989ca4;border-bottom:none;background:linear-gradient(180deg,#f3f3f3 0%,#ebebeb 50%,#dcdcdc 55%,#d2d2d2 100%);"></div>
<div class="t" style="left:631.30px;top:165.63px;font:12.6px Liberation Sans;line-height:12.6px;color:#111;letter-spacing:-0.088px;">Notation</div>
<div style="position:absolute;left:685px;top:161px;width:46px;height:20px;box-sizing:border-box;border:1px solid #989ca4;border-bottom:none;background:linear-gradient(180deg,#f3f3f3 0%,#ebebeb 50%,#dcdcdc 55%,#d2d2d2 100%);"></div>
<div class="t" style="left:690.30px;top:165.63px;font:12.6px Liberation Sans;line-height:12.6px;color:#111;letter-spacing:-0.381px;">Table</div>
<div style="position:absolute;left:733px;top:161px;width:53.5px;height:20px;box-sizing:border-box;border:1px solid #989ca4;border-bottom:none;background:linear-gradient(180deg,#f3f3f3 0%,#ebebeb 50%,#dcdcdc 55%,#d2d2d2 100%);"></div>
<div class="t" style="left:738.60px;top:165.63px;font:12.6px Liberation Sans;line-height:12.6px;color:#111;letter-spacing:-0.279px;">Training</div>
<div style="position:absolute;left:862px;top:161px;width:88.5px;height:20px;box-sizing:border-box;border:1px solid #989ca4;border-bottom:none;background:linear-gradient(180deg,#f3f3f3 0%,#ebebeb 50%,#dcdcdc 55%,#d2d2d2 100%);"></div>
<div class="t" style="left:866.70px;top:165.63px;font:12.6px Liberation Sans;line-height:12.6px;color:#111;transform:scaleX(0.9243);transform-origin:0 0;">Openings Book</div>
<div style="position:absolute;left:786.5px;top:159.5px;width:75.5px;height:23px;box-sizing:border-box;border:1px solid #8e939c;border-bottom:none;background:#fff;"></div>
<div class="t" style="left:794.40px;top:164.63px;font:12.6px Liberation Sans;line-height:12.6px;color:#111;transform:scaleX(0.8987);transform-origin:0 0;">Score sheet</div>
<div style="position:absolute;left:623px;top:185px;width:743px;height:519px;background:#fffff3;"></div>
<div style="position:absolute;left:1010px;top:185px;width:354px;height:14px;background:#f6f6f6;"></div>
<div style="position:absolute;left:623px;top:245px;width:743px;height:4px;background:#f5f5ea;"></div>
<div style="position:absolute;left:628px;top:188px;width:10px;height:10px;box-sizing:border-box;border:1px solid #222;background:#fff;"></div>
<div style="position:absolute;left:998.5px;top:188.3px;width:9.7px;height:9.7px;background:#000;"></div>
<div style="position:absolute;left:644px;top:199px;width:349.5px;height:1px;background:#4a4a4a;"></div>
<div style="position:absolute;left:1014px;top:199px;width:350px;height:1px;background:#4a4a4a;"></div>
<div style="position:absolute;left:685px;top:214px;width:679px;height:1px;background:#4a4a4a;"></div>
<div style="position:absolute;left:662px;top:229px;width:192px;height:1px;background:#4a4a4a;"></div>
<div style="position:absolute;left:882px;top:229px;width:252.5px;height:1px;background:#4a4a4a;"></div>
<div style="position:absolute;left:1169px;top:229px;width:195px;height:1px;background:#4a4a4a;"></div>
<div style="position:absolute;left:650px;top:244px;width:714px;height:1px;background:#4a4a4a;"></div>
<div class="t" style="left:645.00px;top:186.13px;font:italic 13.2px Liberation Sans;line-height:13.2px;color:#1f1fa2;letter-spacing:0.165px;-webkit-text-stroke:0.2px;">Alexander Alekhine</div>
<div class="t" style="left:1014.80px;top:186.13px;font:italic 13.2px Liberation Sans;line-height:13.2px;color:#1f1fa2;letter-spacing:0.006px;-webkit-text-stroke:0.2px;">Fred Dewhirst Yates</div>
<div class="t" style="left:626.60px;top:207.26px;font:9.5px Liberation Sans;line-height:9.5px;color:#111;letter-spacing:0.443px;-webkit-text-stroke:0.15px;">Tournament</div>
<div class="t" style="left:685.80px;top:201.13px;font:italic 13.2px Liberation Sans;line-height:13.2px;color:#1f1fa2;letter-spacing:-0.066px;-webkit-text-stroke:0.2px;">London London, ENG</div>
<div class="t" style="left:626.60px;top:222.26px;font:9.5px Liberation Sans;line-height:9.5px;color:#111;letter-spacing:0.161px;-webkit-text-stroke:0.15px;">Round</div>
<div class="t" style="left:662.60px;top:216.13px;font:italic 13.2px Liberation Sans;line-height:13.2px;color:#1f1fa2;letter-spacing:-0.434px;-webkit-text-stroke:0.2px;">10</div>
<div class="t" style="left:856.80px;top:222.26px;font:9.5px Liberation Sans;line-height:9.5px;color:#111;letter-spacing:-0.267px;-webkit-text-stroke:0.15px;">Date</div>
<div class="t" style="left:883.00px;top:216.13px;font:italic 13.2px Liberation Sans;line-height:13.2px;color:#1f1fa2;letter-spacing:-0.080px;-webkit-text-stroke:0.2px;">12.08.1922</div>
<div class="t" style="left:1137.30px;top:222.26px;font:9.5px Liberation Sans;line-height:9.5px;color:#111;letter-spacing:-0.188px;-webkit-text-stroke:0.15px;">Result</div>
<div class="t" style="left:1170.00px;top:216.13px;font:italic 13.2px Liberation Sans;line-height:13.2px;color:#1f1fa2;letter-spacing:0.447px;-webkit-text-stroke:0.2px;">1-0</div>
<div class="t" style="left:626.60px;top:237.26px;font:9.5px Liberation Sans;line-height:9.5px;color:#111;transform:scaleX(0.8549);transform-origin:0 0;-webkit-text-stroke:0.15px;">ECO</div>
<div class="t" style="left:650.80px;top:231.13px;font:italic 13.2px Liberation Sans;line-height:13.2px;color:#1f1fa2;letter-spacing:0.035px;-webkit-text-stroke:0.2px;">D64: Queen's Gambit Declined: Classical: 7 Rc1 c6 8 Qc2</div>
<div style="position:absolute;left:623px;top:249.5px;width:743px;height:1.6px;background:#12128a;"></div>
<div style="position:absolute;left:725px;top:254px;width:57px;height:320px;background:#f6f6f6;"></div>
<div style="position:absolute;left:668px;top:269px;width:114px;height:1px;background:#4a4a4a;"></div>
<div class="t" style="left:656.66px;top:260.17px;font:9.6px Liberation Sans;line-height:9.6px;color:#000;letter-spacing:-0.6px;">1</div>
<div style="position:absolute;left:668px;top:285px;width:114px;height:1px;background:#4a4a4a;"></div>
<div class="t" style="left:656.66px;top:276.17px;font:9.6px Liberation Sans;line-height:9.6px;color:#000;letter-spacing:-0.6px;">2</div>
<div style="position:absolute;left:668px;top:301px;width:114px;height:1px;background:#4a4a4a;"></div>
<div class="t" style="left:656.66px;top:292.17px;font:9.6px Liberation Sans;line-height:9.6px;color:#000;letter-spacing:-0.6px;">3</div>
<div style="position:absolute;left:668px;top:317px;width:114px;height:1px;background:#4a4a4a;"></div>
<div class="t" style="left:656.66px;top:308.17px;font:9.6px Liberation Sans;line-height:9.6px;color:#000;letter-spacing:-0.6px;">4</div>
<div style="position:absolute;left:668px;top:333px;width:114px;height:1px;background:#4a4a4a;"></div>
<div class="t" style="left:656.66px;top:324.17px;font:9.6px Liberation Sans;line-height:9.6px;color:#000;letter-spacing:-0.6px;">5</div>
<div style="position:absolute;left:668px;top:349px;width:114px;height:1px;background:#4a4a4a;"></div>
<div class="t" style="left:656.66px;top:340.17px;font:9.6px Liberation Sans;line-height:9.6px;color:#000;letter-spacing:-0.6px;">6</div>
<div style="position:absolute;left:668px;top:365px;width:114px;height:1px;background:#4a4a4a;"></div>
<div class="t" style="left:656.66px;top:356.17px;font:9.6px Liberation Sans;line-height:9.6px;color:#000;letter-spacing:-0.6px;">7</div>
<div style="position:absolute;left:668px;top:381px;width:114px;height:1px;background:#4a4a4a;"></div>
<div class="t" style="left:656.66px;top:372.17px;font:9.6px Liberation Sans;line-height:9.6px;color:#000;letter-spacing:-0.6px;">8</div>
<div style="position:absolute;left:668px;top:397px;width:114px;height:1px;background:#4a4a4a;"></div>
<div class="t" style="left:656.66px;top:388.17px;font:9.6px Liberation Sans;line-height:9.6px;color:#000;letter-spacing:-0.6px;">9</div>
<div style="position:absolute;left:668px;top:413px;width:114px;height:1px;background:#4a4a4a;"></div>
<div class="t" style="left:651.33px;top:404.17px;font:9.6px Liberation Sans;line-height:9.6px;color:#000;letter-spacing:-0.6px;">10</div>
<div style="position:absolute;left:668px;top:429px;width:114px;height:1px;background:#4a4a4a;"></div>
<div class="t" style="left:652.04px;top:420.17px;font:9.6px Liberation Sans;line-height:9.6px;color:#000;letter-spacing:-0.6px;">11</div>
<div style="position:absolute;left:668px;top:445px;width:114px;height:1px;background:#4a4a4a;"></div>
<div class="t" style="left:651.33px;top:436.17px;font:9.6px Liberation Sans;line-height:9.6px;color:#000;letter-spacing:-0.6px;">12</div>
<div style="position:absolute;left:668px;top:461px;width:114px;height:1px;background:#4a4a4a;"></div>
<div class="t" style="left:651.33px;top:452.17px;font:9.6px Liberation Sans;line-height:9.6px;color:#000;letter-spacing:-0.6px;">13</div>
<div style="position:absolute;left:668px;top:477px;width:114px;height:1px;background:#4a4a4a;"></div>
<div class="t" style="left:651.33px;top:468.17px;font:9.6px Liberation Sans;line-height:9.6px;color:#000;letter-spacing:-0.6px;">14</div>
<div style="position:absolute;left:668px;top:493px;width:114px;height:1px;background:#4a4a4a;"></div>
<div class="t" style="left:651.33px;top:484.17px;font:9.6px Liberation Sans;line-height:9.6px;color:#000;letter-spacing:-0.6px;">15</div>
<div style="position:absolute;left:668px;top:509px;width:114px;height:1px;background:#4a4a4a;"></div>
<div class="t" style="left:651.33px;top:500.17px;font:9.6px Liberation Sans;line-height:9.6px;color:#000;letter-spacing:-0.6px;">16</div>
<div style="position:absolute;left:668px;top:525px;width:114px;height:1px;background:#4a4a4a;"></div>
<div class="t" style="left:651.33px;top:516.17px;font:9.6px Liberation Sans;line-height:9.6px;color:#000;letter-spacing:-0.6px;">17</div>
<div style="position:absolute;left:668px;top:541px;width:114px;height:1px;background:#4a4a4a;"></div>
<div class="t" style="left:651.33px;top:532.17px;font:9.6px Liberation Sans;line-height:9.6px;color:#000;letter-spacing:-0.6px;">18</div>
<div style="position:absolute;left:668px;top:557px;width:114px;height:1px;background:#4a4a4a;"></div>
<div class="t" style="left:651.33px;top:548.17px;font:9.6px Liberation Sans;line-height:9.6px;color:#000;letter-spacing:-0.6px;">19</div>
<div style="position:absolute;left:668px;top:573px;width:114px;height:1px;background:#4a4a4a;"></div>
<div class="t" style="left:651.33px;top:564.17px;font:9.6px Liberation Sans;line-height:9.6px;color:#000;letter-spacing:-0.6px;">20</div>
<div style="position:absolute;left:862px;top:254px;width:57px;height:320px;background:#f6f6f6;"></div>
<div style="position:absolute;left:805px;top:269px;width:114px;height:1px;background:#4a4a4a;"></div>
<div class="t" style="left:788.33px;top:260.17px;font:9.6px Liberation Sans;line-height:9.6px;color:#000;letter-spacing:-0.6px;">21</div>
<div style="position:absolute;left:805px;top:285px;width:114px;height:1px;background:#4a4a4a;"></div>
<div class="t" style="left:788.33px;top:276.17px;font:9.6px Liberation Sans;line-height:9.6px;color:#000;letter-spacing:-0.6px;">22</div>
<div style="position:absolute;left:805px;top:301px;width:114px;height:1px;background:#4a4a4a;"></div>
<div class="t" style="left:788.33px;top:292.17px;font:9.6px Liberation Sans;line-height:9.6px;color:#000;letter-spacing:-0.6px;">23</div>
<div style="position:absolute;left:805px;top:317px;width:114px;height:1px;background:#4a4a4a;"></div>
<div class="t" style="left:788.33px;top:308.17px;font:9.6px Liberation Sans;line-height:9.6px;color:#000;letter-spacing:-0.6px;">24</div>
<div style="position:absolute;left:805px;top:333px;width:114px;height:1px;background:#4a4a4a;"></div>
<div class="t" style="left:788.33px;top:324.17px;font:9.6px Liberation Sans;line-height:9.6px;color:#000;letter-spacing:-0.6px;">25</div>
<div style="position:absolute;left:805px;top:349px;width:114px;height:1px;background:#4a4a4a;"></div>
<div class="t" style="left:788.33px;top:340.17px;font:9.6px Liberation Sans;line-height:9.6px;color:#000;letter-spacing:-0.6px;">26</div>
<div style="position:absolute;left:805px;top:365px;width:114px;height:1px;background:#4a4a4a;"></div>
<div class="t" style="left:788.33px;top:356.17px;font:9.6px Liberation Sans;line-height:9.6px;color:#000;letter-spacing:-0.6px;">27</div>
<div style="position:absolute;left:805px;top:381px;width:114px;height:1px;background:#4a4a4a;"></div>
<div class="t" style="left:788.33px;top:372.17px;font:9.6px Liberation Sans;line-height:9.6px;color:#000;letter-spacing:-0.6px;">28</div>
<div style="position:absolute;left:805px;top:397px;width:114px;height:1px;background:#4a4a4a;"></div>
<div class="t" style="left:788.33px;top:388.17px;font:9.6px Liberation Sans;line-height:9.6px;color:#000;letter-spacing:-0.6px;">29</div>
<div style="position:absolute;left:805px;top:413px;width:114px;height:1px;background:#4a4a4a;"></div>
<div class="t" style="left:788.33px;top:404.17px;font:9.6px Liberation Sans;line-height:9.6px;color:#000;letter-spacing:-0.6px;">30</div>
<div style="position:absolute;left:805px;top:429px;width:114px;height:1px;background:#4a4a4a;"></div>
<div class="t" style="left:788.33px;top:420.17px;font:9.6px Liberation Sans;line-height:9.6px;color:#000;letter-spacing:-0.6px;">31</div>
<div style="position:absolute;left:805px;top:445px;width:114px;height:1px;background:#4a4a4a;"></div>
<div class="t" style="left:788.33px;top:436.17px;font:9.6px Liberation Sans;line-height:9.6px;color:#000;letter-spacing:-0.6px;">32</div>
<div style="position:absolute;left:805px;top:461px;width:114px;height:1px;background:#4a4a4a;"></div>
<div class="t" style="left:788.33px;top:452.17px;font:9.6px Liberation Sans;line-height:9.6px;color:#000;letter-spacing:-0.6px;">33</div>
<div style="position:absolute;left:805px;top:477px;width:114px;height:1px;background:#4a4a4a;"></div>
<div class="t" style="left:788.33px;top:468.17px;font:9.6px Liberation Sans;line-height:9.6px;color:#000;letter-spacing:-0.6px;">34</div>
<div style="position:absolute;left:805px;top:493px;width:114px;height:1px;background:#4a4a4a;"></div>
<div class="t" style="left:788.33px;top:484.17px;font:9.6px Liberation Sans;line-height:9.6px;color:#000;letter-spacing:-0.6px;">35</div>
<div style="position:absolute;left:805px;top:509px;width:114px;height:1px;background:#4a4a4a;"></div>
<div class="t" style="left:788.33px;top:500.17px;font:9.6px Liberation Sans;line-height:9.6px;color:#000;letter-spacing:-0.6px;">36</div>
<div style="position:absolute;left:805px;top:525px;width:114px;height:1px;background:#4a4a4a;"></div>
<div class="t" style="left:788.33px;top:516.17px;font:9.6px Liberation Sans;line-height:9.6px;color:#000;letter-spacing:-0.6px;">37</div>
<div style="position:absolute;left:805px;top:541px;width:114px;height:1px;background:#4a4a4a;"></div>
<div class="t" style="left:788.33px;top:532.17px;font:9.6px Liberation Sans;line-height:9.6px;color:#000;letter-spacing:-0.6px;">38</div>
<div style="position:absolute;left:805px;top:557px;width:114px;height:1px;background:#4a4a4a;"></div>
<div class="t" style="left:788.33px;top:548.17px;font:9.6px Liberation Sans;line-height:9.6px;color:#000;letter-spacing:-0.6px;">39</div>
<div style="position:absolute;left:805px;top:573px;width:114px;height:1px;background:#4a4a4a;"></div>
<div class="t" style="left:788.33px;top:564.17px;font:9.6px Liberation Sans;line-height:9.6px;color:#000;letter-spacing:-0.6px;">40</div>
<div style="position:absolute;left:999px;top:254px;width:57px;height:320px;background:#f6f6f6;"></div>
<div style="position:absolute;left:942px;top:269px;width:114px;height:1px;background:#4a4a4a;"></div>
<div class="t" style="left:925.33px;top:260.17px;font:9.6px Liberation Sans;line-height:9.6px;color:#000;letter-spacing:-0.6px;">41</div>
<div style="position:absolute;left:942px;top:285px;width:114px;height:1px;background:#4a4a4a;"></div>
<div class="t" style="left:925.33px;top:276.17px;font:9.6px Liberation Sans;line-height:9.6px;color:#000;letter-spacing:-0.6px;">42</div>
<div style="position:absolute;left:942px;top:301px;width:114px;height:1px;background:#4a4a4a;"></div>
<div class="t" style="left:925.33px;top:292.17px;font:9.6px Liberation Sans;line-height:9.6px;color:#000;letter-spacing:-0.6px;">43</div>
<div style="position:absolute;left:942px;top:317px;width:114px;height:1px;background:#4a4a4a;"></div>
<div class="t" style="left:925.33px;top:308.17px;font:9.6px Liberation Sans;line-height:9.6px;color:#000;letter-spacing:-0.6px;">44</div>
<div style="position:absolute;left:942px;top:333px;width:114px;height:1px;background:#4a4a4a;"></div>
<div class="t" style="left:925.33px;top:324.17px;font:9.6px Liberation Sans;line-height:9.6px;color:#000;letter-spacing:-0.6px;">45</div>
<div style="position:absolute;left:942px;top:349px;width:114px;height:1px;background:#4a4a4a;"></div>
<div class="t" style="left:925.33px;top:340.17px;font:9.6px Liberation Sans;line-height:9.6px;color:#000;letter-spacing:-0.6px;">46</div>
<div style="position:absolute;left:942px;top:365px;width:114px;height:1px;background:#4a4a4a;"></div>
<div class="t" style="left:925.33px;top:356.17px;font:9.6px Liberation Sans;line-height:9.6px;color:#000;letter-spacing:-0.6px;">47</div>
<div style="position:absolute;left:942px;top:381px;width:114px;height:1px;background:#4a4a4a;"></div>
<div class="t" style="left:925.33px;top:372.17px;font:9.6px Liberation Sans;line-height:9.6px;color:#000;letter-spacing:-0.6px;">48</div>
<div style="position:absolute;left:942px;top:397px;width:114px;height:1px;background:#4a4a4a;"></div>
<div class="t" style="left:925.33px;top:388.17px;font:9.6px Liberation Sans;line-height:9.6px;color:#000;letter-spacing:-0.6px;">49</div>
<div style="position:absolute;left:942px;top:413px;width:114px;height:1px;background:#4a4a4a;"></div>
<div class="t" style="left:925.33px;top:404.17px;font:9.6px Liberation Sans;line-height:9.6px;color:#000;letter-spacing:-0.6px;">50</div>
<div style="position:absolute;left:942px;top:429px;width:114px;height:1px;background:#4a4a4a;"></div>
<div class="t" style="left:925.33px;top:420.17px;font:9.6px Liberation Sans;line-height:9.6px;color:#000;letter-spacing:-0.6px;">51</div>
<div style="position:absolute;left:942px;top:445px;width:114px;height:1px;background:#4a4a4a;"></div>
<div class="t" style="left:925.33px;top:436.17px;font:9.6px Liberation Sans;line-height:9.6px;color:#000;letter-spacing:-0.6px;">52</div>
<div style="position:absolute;left:942px;top:461px;width:114px;height:1px;background:#4a4a4a;"></div>
<div class="t" style="left:925.33px;top:452.17px;font:9.6px Liberation Sans;line-height:9.6px;color:#000;letter-spacing:-0.6px;">53</div>
<div style="position:absolute;left:942px;top:477px;width:114px;height:1px;background:#4a4a4a;"></div>
<div class="t" style="left:925.33px;top:468.17px;font:9.6px Liberation Sans;line-height:9.6px;color:#000;letter-spacing:-0.6px;">54</div>
<div style="position:absolute;left:942px;top:493px;width:114px;height:1px;background:#4a4a4a;"></div>
<div class="t" style="left:925.33px;top:484.17px;font:9.6px Liberation Sans;line-height:9.6px;color:#000;letter-spacing:-0.6px;">55</div>
<div style="position:absolute;left:942px;top:509px;width:114px;height:1px;background:#4a4a4a;"></div>
<div class="t" style="left:925.33px;top:500.17px;font:9.6px Liberation Sans;line-height:9.6px;color:#000;letter-spacing:-0.6px;">56</div>
<div style="position:absolute;left:942px;top:525px;width:114px;height:1px;background:#4a4a4a;"></div>
<div class="t" style="left:925.33px;top:516.17px;font:9.6px Liberation Sans;line-height:9.6px;color:#000;letter-spacing:-0.6px;">57</div>
<div style="position:absolute;left:942px;top:541px;width:114px;height:1px;background:#4a4a4a;"></div>
<div class="t" style="left:925.33px;top:532.17px;font:9.6px Liberation Sans;line-height:9.6px;color:#000;letter-spacing:-0.6px;">58</div>
<div style="position:absolute;left:942px;top:557px;width:114px;height:1px;background:#4a4a4a;"></div>
<div class="t" style="left:925.33px;top:548.17px;font:9.6px Liberation Sans;line-height:9.6px;color:#000;letter-spacing:-0.6px;">59</div>
<div style="position:absolute;left:942px;top:573px;width:114px;height:1px;background:#4a4a4a;"></div>
<div class="t" style="left:925.33px;top:564.17px;font:9.6px Liberation Sans;line-height:9.6px;color:#000;letter-spacing:-0.6px;">60</div>
<div style="position:absolute;left:1136px;top:254px;width:57px;height:320px;background:#f6f6f6;"></div>
<div style="position:absolute;left:1079px;top:269px;width:114px;height:1px;background:#4a4a4a;"></div>
<div class="t" style="left:1062.33px;top:260.17px;font:9.6px Liberation Sans;line-height:9.6px;color:#000;letter-spacing:-0.6px;">61</div>
<div style="position:absolute;left:1079px;top:285px;width:114px;height:1px;background:#4a4a4a;"></div>
<div class="t" style="left:1062.33px;top:276.17px;font:9.6px Liberation Sans;line-height:9.6px;color:#000;letter-spacing:-0.6px;">62</div>
<div style="position:absolute;left:1079px;top:301px;width:114px;height:1px;background:#4a4a4a;"></div>
<div class="t" style="left:1062.33px;top:292.17px;font:9.6px Liberation Sans;line-height:9.6px;color:#000;letter-spacing:-0.6px;">63</div>
<div style="position:absolute;left:1079px;top:317px;width:114px;height:1px;background:#4a4a4a;"></div>
<div class="t" style="left:1062.33px;top:308.17px;font:9.6px Liberation Sans;line-height:9.6px;color:#000;letter-spacing:-0.6px;">64</div>
<div style="position:absolute;left:1079px;top:333px;width:114px;height:1px;background:#4a4a4a;"></div>
<div class="t" style="left:1062.33px;top:324.17px;font:9.6px Liberation Sans;line-height:9.6px;color:#000;letter-spacing:-0.6px;">65</div>
<div style="position:absolute;left:1079px;top:349px;width:114px;height:1px;background:#4a4a4a;"></div>
<div class="t" style="left:1062.33px;top:340.17px;font:9.6px Liberation Sans;line-height:9.6px;color:#000;letter-spacing:-0.6px;">66</div>
<div style="position:absolute;left:1079px;top:365px;width:114px;height:1px;background:#4a4a4a;"></div>
<div class="t" style="left:1062.33px;top:356.17px;font:9.6px Liberation Sans;line-height:9.6px;color:#000;letter-spacing:-0.6px;">67</div>
<div style="position:absolute;left:1079px;top:381px;width:114px;height:1px;background:#4a4a4a;"></div>
<div class="t" style="left:1062.33px;top:372.17px;font:9.6px Liberation Sans;line-height:9.6px;color:#000;letter-spacing:-0.6px;">68</div>
<div style="position:absolute;left:1079px;top:397px;width:114px;height:1px;background:#4a4a4a;"></div>
<div class="t" style="left:1062.33px;top:388.17px;font:9.6px Liberation Sans;line-height:9.6px;color:#000;letter-spacing:-0.6px;">69</div>
<div style="position:absolute;left:1079px;top:413px;width:114px;height:1px;background:#4a4a4a;"></div>
<div class="t" style="left:1062.33px;top:404.17px;font:9.6px Liberation Sans;line-height:9.6px;color:#000;letter-spacing:-0.6px;">70</div>
<div style="position:absolute;left:1079px;top:429px;width:114px;height:1px;background:#4a4a4a;"></div>
<div class="t" style="left:1062.33px;top:420.17px;font:9.6px Liberation Sans;line-height:9.6px;color:#000;letter-spacing:-0.6px;">71</div>
<div style="position:absolute;left:1079px;top:445px;width:114px;height:1px;background:#4a4a4a;"></div>
<div class="t" style="left:1062.33px;top:436.17px;font:9.6px Liberation Sans;line-height:9.6px;color:#000;letter-spacing:-0.6px;">72</div>
<div style="position:absolute;left:1079px;top:461px;width:114px;height:1px;background:#4a4a4a;"></div>
<div class="t" style="left:1062.33px;top:452.17px;font:9.6px Liberation Sans;line-height:9.6px;color:#000;letter-spacing:-0.6px;">73</div>
<div style="position:absolute;left:1079px;top:477px;width:114px;height:1px;background:#4a4a4a;"></div>
<div class="t" style="left:1062.33px;top:468.17px;font:9.6px Liberation Sans;line-height:9.6px;color:#000;letter-spacing:-0.6px;">74</div>
<div style="position:absolute;left:1079px;top:493px;width:114px;height:1px;background:#4a4a4a;"></div>
<div class="t" style="left:1062.33px;top:484.17px;font:9.6px Liberation Sans;line-height:9.6px;color:#000;letter-spacing:-0.6px;">75</div>
<div style="position:absolute;left:1079px;top:509px;width:114px;height:1px;background:#4a4a4a;"></div>
<div class="t" style="left:1062.33px;top:500.17px;font:9.6px Liberation Sans;line-height:9.6px;color:#000;letter-spacing:-0.6px;">76</div>
<div style="position:absolute;left:1079px;top:525px;width:114px;height:1px;background:#4a4a4a;"></div>
<div class="t" style="left:1062.33px;top:516.17px;font:9.6px Liberation Sans;line-height:9.6px;color:#000;letter-spacing:-0.6px;">77</div>
<div style="position:absolute;left:1079px;top:541px;width:114px;height:1px;background:#4a4a4a;"></div>
<div class="t" style="left:1062.33px;top:532.17px;font:9.6px Liberation Sans;line-height:9.6px;color:#000;letter-spacing:-0.6px;">78</div>
<div style="position:absolute;left:1079px;top:557px;width:114px;height:1px;background:#4a4a4a;"></div>
<div class="t" style="left:1062.33px;top:548.17px;font:9.6px Liberation Sans;line-height:9.6px;color:#000;letter-spacing:-0.6px;">79</div>
<div style="position:absolute;left:1079px;top:573px;width:114px;height:1px;background:#4a4a4a;"></div>
<div class="t" style="left:1062.33px;top:564.17px;font:9.6px Liberation Sans;line-height:9.6px;color:#000;letter-spacing:-0.6px;">80</div>
<div style="position:absolute;left:1273px;top:254px;width:57px;height:320px;background:#f6f6f6;"></div>
<div style="position:absolute;left:1216px;top:269px;width:114px;height:1px;background:#4a4a4a;"></div>
<div class="t" style="left:1199.33px;top:260.17px;font:9.6px Liberation Sans;line-height:9.6px;color:#000;letter-spacing:-0.6px;">81</div>
<div style="position:absolute;left:1216px;top:285px;width:114px;height:1px;background:#4a4a4a;"></div>
<div class="t" style="left:1199.33px;top:276.17px;font:9.6px Liberation Sans;line-height:9.6px;color:#000;letter-spacing:-0.6px;">82</div>
<div style="position:absolute;left:1216px;top:301px;width:114px;height:1px;background:#4a4a4a;"></div>
<div class="t" style="left:1199.33px;top:292.17px;font:9.6px Liberation Sans;line-height:9.6px;color:#000;letter-spacing:-0.6px;">83</div>
<div style="position:absolute;left:1216px;top:317px;width:114px;height:1px;background:#4a4a4a;"></div>
<div class="t" style="left:1199.33px;top:308.17px;font:9.6px Liberation Sans;line-height:9.6px;color:#000;letter-spacing:-0.6px;">84</div>
<div style="position:absolute;left:1216px;top:333px;width:114px;height:1px;background:#4a4a4a;"></div>
<div class="t" style="left:1199.33px;top:324.17px;font:9.6px Liberation Sans;line-height:9.6px;color:#000;letter-spacing:-0.6px;">85</div>
<div style="position:absolute;left:1216px;top:349px;width:114px;height:1px;background:#4a4a4a;"></div>
<div class="t" style="left:1199.33px;top:340.17px;font:9.6px Liberation Sans;line-height:9.6px;color:#000;letter-spacing:-0.6px;">86</div>
<div style="position:absolute;left:1216px;top:365px;width:114px;height:1px;background:#4a4a4a;"></div>
<div class="t" style="left:1199.33px;top:356.17px;font:9.6px Liberation Sans;line-height:9.6px;color:#000;letter-spacing:-0.6px;">87</div>
<div style="position:absolute;left:1216px;top:381px;width:114px;height:1px;background:#4a4a4a;"></div>
<div class="t" style="left:1199.33px;top:372.17px;font:9.6px Liberation Sans;line-height:9.6px;color:#000;letter-spacing:-0.6px;">88</div>
<div style="position:absolute;left:1216px;top:397px;width:114px;height:1px;background:#4a4a4a;"></div>
<div class="t" style="left:1199.33px;top:388.17px;font:9.6px Liberation Sans;line-height:9.6px;color:#000;letter-spacing:-0.6px;">89</div>
<div style="position:absolute;left:1216px;top:413px;width:114px;height:1px;background:#4a4a4a;"></div>
<div class="t" style="left:1199.33px;top:404.17px;font:9.6px Liberation Sans;line-height:9.6px;color:#000;letter-spacing:-0.6px;">90</div>
<div style="position:absolute;left:1216px;top:429px;width:114px;height:1px;background:#4a4a4a;"></div>
<div class="t" style="left:1199.33px;top:420.17px;font:9.6px Liberation Sans;line-height:9.6px;color:#000;letter-spacing:-0.6px;">91</div>
<div style="position:absolute;left:1216px;top:445px;width:114px;height:1px;background:#4a4a4a;"></div>
<div class="t" style="left:1199.33px;top:436.17px;font:9.6px Liberation Sans;line-height:9.6px;color:#000;letter-spacing:-0.6px;">92</div>
<div style="position:absolute;left:1216px;top:461px;width:114px;height:1px;background:#4a4a4a;"></div>
<div class="t" style="left:1199.33px;top:452.17px;font:9.6px Liberation Sans;line-height:9.6px;color:#000;letter-spacing:-0.6px;">93</div>
<div style="position:absolute;left:1216px;top:477px;width:114px;height:1px;background:#4a4a4a;"></div>
<div class="t" style="left:1199.33px;top:468.17px;font:9.6px Liberation Sans;line-height:9.6px;color:#000;letter-spacing:-0.6px;">94</div>
<div style="position:absolute;left:1216px;top:493px;width:114px;height:1px;background:#4a4a4a;"></div>
<div class="t" style="left:1199.33px;top:484.17px;font:9.6px Liberation Sans;line-height:9.6px;color:#000;letter-spacing:-0.6px;">95</div>
<div style="position:absolute;left:1216px;top:509px;width:114px;height:1px;background:#4a4a4a;"></div>
<div class="t" style="left:1199.33px;top:500.17px;font:9.6px Liberation Sans;line-height:9.6px;color:#000;letter-spacing:-0.6px;">96</div>
<div style="position:absolute;left:1216px;top:525px;width:114px;height:1px;background:#4a4a4a;"></div>
<div class="t" style="left:1199.33px;top:516.17px;font:9.6px Liberation Sans;line-height:9.6px;color:#000;letter-spacing:-0.6px;">97</div>
<div style="position:absolute;left:1216px;top:541px;width:114px;height:1px;background:#4a4a4a;"></div>
<div class="t" style="left:1199.33px;top:532.17px;font:9.6px Liberation Sans;line-height:9.6px;color:#000;letter-spacing:-0.6px;">98</div>
<div style="position:absolute;left:1216px;top:557px;width:114px;height:1px;background:#4a4a4a;"></div>
<div class="t" style="left:1199.33px;top:548.17px;font:9.6px Liberation Sans;line-height:9.6px;color:#000;letter-spacing:-0.6px;">99</div>
<div style="position:absolute;left:1216px;top:573px;width:114px;height:1px;background:#4a4a4a;"></div>
<div class="t" style="left:1193.99px;top:564.17px;font:9.6px Liberation Sans;line-height:9.6px;color:#000;letter-spacing:-0.6px;">100</div>
<div style="position:absolute;left:668px;top:269px;width:57px;height:16px;background:#0a0a0a;"></div>
<div class="t" style="left:671.40px;top:254.14px;font:italic 13.33px Liberation Serif;line-height:13.33px;color:#1f1fa2;-webkit-text-stroke:0.2px #1f1fa2;">d4</div>
<div class="t" style="left:728.20px;top:254.14px;font:italic 13.33px Liberation Serif;line-height:13.33px;color:#1f1fa2;-webkit-text-stroke:0.2px #1f1fa2;">Nf6</div>
<div class="t" style="left:671.40px;top:270.14px;font:italic 13.33px Liberation Serif;line-height:13.33px;color:#f2c46a;-webkit-text-stroke:0.2px #f2c46a;">c4</div>
<div class="t" style="left:728.20px;top:270.14px;font:italic 13.33px Liberation Serif;line-height:13.33px;color:#1f1fa2;-webkit-text-stroke:0.2px #1f1fa2;">e6</div>
<div class="t" style="left:671.40px;top:286.14px;font:italic 13.33px Liberation Serif;line-height:13.33px;color:#1f1fa2;-webkit-text-stroke:0.2px #1f1fa2;">Nf3</div>
<div class="t" style="left:728.20px;top:286.14px;font:italic 13.33px Liberation Serif;line-height:13.33px;color:#1f1fa2;-webkit-text-stroke:0.2px #1f1fa2;">d5</div>
<div class="t" style="left:671.40px;top:302.14px;font:italic 13.33px Liberation Serif;line-height:13.33px;color:#1f1fa2;-webkit-text-stroke:0.2px #1f1fa2;">Nc3</div>
<div class="t" style="left:728.20px;top:302.14px;font:italic 13.33px Liberation Serif;line-height:13.33px;color:#1f1fa2;-webkit-text-stroke:0.2px #1f1fa2;">Be7</div>
<div class="t" style="left:671.40px;top:318.14px;font:italic 13.33px Liberation Serif;line-height:13.33px;color:#1f1fa2;-webkit-text-stroke:0.2px #1f1fa2;">Bg5</div>
<div class="t" style="left:728.20px;top:318.14px;font:italic 13.33px Liberation Serif;line-height:13.33px;color:#1f1fa2;-webkit-text-stroke:0.2px #1f1fa2;">0-0</div>
<div class="t" style="left:671.40px;top:334.14px;font:italic 13.33px Liberation Serif;line-height:13.33px;color:#1f1fa2;-webkit-text-stroke:0.2px #1f1fa2;">e3</div>
<div class="t" style="left:728.20px;top:334.14px;font:italic 13.33px Liberation Serif;line-height:13.33px;color:#1f1fa2;-webkit-text-stroke:0.2px #1f1fa2;">Nbd7</div>
<div class="t" style="left:671.40px;top:350.14px;font:italic 13.33px Liberation Serif;line-height:13.33px;color:#1f1fa2;-webkit-text-stroke:0.2px #1f1fa2;">Rc1</div>
<div class="t" style="left:728.20px;top:350.14px;font:italic 13.33px Liberation Serif;line-height:13.33px;color:#1f1fa2;-webkit-text-stroke:0.2px #1f1fa2;">c6</div>
<div class="t" style="left:671.40px;top:366.14px;font:italic 13.33px Liberation Serif;line-height:13.33px;color:#1f1fa2;-webkit-text-stroke:0.2px #1f1fa2;">Qc2</div>
<div class="t" style="left:728.20px;top:366.14px;font:italic 13.33px Liberation Serif;line-height:13.33px;color:#1f1fa2;-webkit-text-stroke:0.2px #1f1fa2;">Re8</div>
<div class="t" style="left:671.40px;top:382.14px;font:italic 13.33px Liberation Serif;line-height:13.33px;color:#1f1fa2;-webkit-text-stroke:0.2px #1f1fa2;">Bd3</div>
<div class="t" style="left:728.20px;top:382.14px;font:italic 13.33px Liberation Serif;line-height:13.33px;color:#1f1fa2;-webkit-text-stroke:0.2px #1f1fa2;">dxc4</div>
<div class="t" style="left:671.40px;top:398.14px;font:italic 13.33px Liberation Serif;line-height:13.33px;color:#1f1fa2;-webkit-text-stroke:0.2px #1f1fa2;">Bxc4</div>
<div class="t" style="left:728.20px;top:398.14px;font:italic 13.33px Liberation Serif;line-height:13.33px;color:#1f1fa2;-webkit-text-stroke:0.2px #1f1fa2;">Nd5</div>
<div class="t" style="left:671.40px;top:414.14px;font:italic 13.33px Liberation Serif;line-height:13.33px;color:#1f1fa2;-webkit-text-stroke:0.2px #1f1fa2;">Ne4</div>
<div class="t" style="left:728.20px;top:414.14px;font:italic 13.33px Liberation Serif;line-height:13.33px;color:#1f1fa2;-webkit-text-stroke:0.2px #1f1fa2;">f5</div>
<div class="t" style="left:671.40px;top:430.14px;font:italic 13.33px Liberation Serif;line-height:13.33px;color:#1f1fa2;-webkit-text-stroke:0.2px #1f1fa2;">Bxe7</div>
<div class="t" style="left:728.20px;top:430.14px;font:italic 13.33px Liberation Serif;line-height:13.33px;color:#1f1fa2;-webkit-text-stroke:0.2px #1f1fa2;">Qxe7</div>
<div class="t" style="left:671.40px;top:446.14px;font:italic 13.33px Liberation Serif;line-height:13.33px;color:#1f1fa2;-webkit-text-stroke:0.2px #1f1fa2;">Ned2</div>
<div class="t" style="left:728.20px;top:446.14px;font:italic 13.33px Liberation Serif;line-height:13.33px;color:#1f1fa2;-webkit-text-stroke:0.2px #1f1fa2;">b5</div>
<div class="t" style="left:671.40px;top:462.14px;font:italic 13.33px Liberation Serif;line-height:13.33px;color:#1f1fa2;-webkit-text-stroke:0.2px #1f1fa2;">Bxd5</div>
<div class="t" style="left:728.20px;top:462.14px;font:italic 13.33px Liberation Serif;line-height:13.33px;color:#1f1fa2;-webkit-text-stroke:0.2px #1f1fa2;">cxd5</div>
<div class="t" style="left:671.40px;top:478.14px;font:italic 13.33px Liberation Serif;line-height:13.33px;color:#1f1fa2;-webkit-text-stroke:0.2px #1f1fa2;">0-0</div>
<div class="t" style="left:728.20px;top:478.14px;font:italic 13.33px Liberation Serif;line-height:13.33px;color:#1f1fa2;-webkit-text-stroke:0.2px #1f1fa2;">a5</div>
<div class="t" style="left:671.40px;top:494.14px;font:italic 13.33px Liberation Serif;line-height:13.33px;color:#1f1fa2;-webkit-text-stroke:0.2px #1f1fa2;">Nb3</div>
<div class="t" style="left:728.20px;top:494.14px;font:italic 13.33px Liberation Serif;line-height:13.33px;color:#1f1fa2;-webkit-text-stroke:0.2px #1f1fa2;">a4</div>
<div class="t" style="left:671.40px;top:510.14px;font:italic 13.33px Liberation Serif;line-height:13.33px;color:#1f1fa2;-webkit-text-stroke:0.2px #1f1fa2;">Nc5</div>
<div class="t" style="left:728.20px;top:510.14px;font:italic 13.33px Liberation Serif;line-height:13.33px;color:#1f1fa2;-webkit-text-stroke:0.2px #1f1fa2;">Nxc5</div>
<div class="t" style="left:671.40px;top:526.14px;font:italic 13.33px Liberation Serif;line-height:13.33px;color:#1f1fa2;-webkit-text-stroke:0.2px #1f1fa2;">Qxc5</div>
<div class="t" style="left:728.20px;top:526.14px;font:italic 13.33px Liberation Serif;line-height:13.33px;color:#1f1fa2;-webkit-text-stroke:0.2px #1f1fa2;">Qxc5</div>
<div class="t" style="left:671.40px;top:542.14px;font:italic 13.33px Liberation Serif;line-height:13.33px;color:#1f1fa2;-webkit-text-stroke:0.2px #1f1fa2;">Rxc5</div>
<div class="t" style="left:728.20px;top:542.14px;font:italic 13.33px Liberation Serif;line-height:13.33px;color:#1f1fa2;-webkit-text-stroke:0.2px #1f1fa2;">b4</div>
<div class="t" style="left:671.40px;top:558.14px;font:italic 13.33px Liberation Serif;line-height:13.33px;color:#1f1fa2;-webkit-text-stroke:0.2px #1f1fa2;">Rfc1</div>
<div class="t" style="left:728.20px;top:558.14px;font:italic 13.33px Liberation Serif;line-height:13.33px;color:#1f1fa2;-webkit-text-stroke:0.2px #1f1fa2;">Ba6</div>
<div class="t" style="left:808.40px;top:254.14px;font:italic 13.33px Liberation Serif;line-height:13.33px;color:#1f1fa2;-webkit-text-stroke:0.2px #1f1fa2;">Ne5</div>
<div class="t" style="left:865.20px;top:254.14px;font:italic 13.33px Liberation Serif;line-height:13.33px;color:#1f1fa2;-webkit-text-stroke:0.2px #1f1fa2;">Reb8</div>
<div class="t" style="left:808.40px;top:270.14px;font:italic 13.33px Liberation Serif;line-height:13.33px;color:#1f1fa2;-webkit-text-stroke:0.2px #1f1fa2;">f3</div>
<div class="t" style="left:865.20px;top:270.14px;font:italic 13.33px Liberation Serif;line-height:13.33px;color:#1f1fa2;-webkit-text-stroke:0.2px #1f1fa2;">b3</div>
<div class="t" style="left:808.40px;top:286.14px;font:italic 13.33px Liberation Serif;line-height:13.33px;color:#1f1fa2;-webkit-text-stroke:0.2px #1f1fa2;">a3</div>
<div class="t" style="left:865.20px;top:286.14px;font:italic 13.33px Liberation Serif;line-height:13.33px;color:#1f1fa2;-webkit-text-stroke:0.2px #1f1fa2;">h6</div>
<div class="t" style="left:808.40px;top:302.14px;font:italic 13.33px Liberation Serif;line-height:13.33px;color:#1f1fa2;-webkit-text-stroke:0.2px #1f1fa2;">Kf2</div>
<div class="t" style="left:865.20px;top:302.14px;font:italic 13.33px Liberation Serif;line-height:13.33px;color:#1f1fa2;-webkit-text-stroke:0.2px #1f1fa2;">Kh7</div>
<div class="t" style="left:808.40px;top:318.14px;font:italic 13.33px Liberation Serif;line-height:13.33px;color:#1f1fa2;-webkit-text-stroke:0.2px #1f1fa2;">h4</div>
<div class="t" style="left:865.20px;top:318.14px;font:italic 13.33px Liberation Serif;line-height:13.33px;color:#1f1fa2;-webkit-text-stroke:0.2px #1f1fa2;">Rf8</div>
<div class="t" style="left:808.40px;top:334.14px;font:italic 13.33px Liberation Serif;line-height:13.33px;color:#1f1fa2;-webkit-text-stroke:0.2px #1f1fa2;">Kg3</div>
<div class="t" style="left:865.20px;top:334.14px;font:italic 13.33px Liberation Serif;line-height:13.33px;color:#1f1fa2;-webkit-text-stroke:0.2px #1f1fa2;">Rfb8</div>
<div class="t" style="left:808.40px;top:350.14px;font:italic 13.33px Liberation Serif;line-height:13.33px;color:#1f1fa2;-webkit-text-stroke:0.2px #1f1fa2;">Rc7</div>
<div class="t" style="left:865.20px;top:350.14px;font:italic 13.33px Liberation Serif;line-height:13.33px;color:#1f1fa2;-webkit-text-stroke:0.2px #1f1fa2;">Bb5</div>
<div class="t" style="left:808.40px;top:366.14px;font:italic 13.33px Liberation Serif;line-height:13.33px;color:#1f1fa2;-webkit-text-stroke:0.2px #1f1fa2;">R1c5</div>
<div class="t" style="left:865.20px;top:366.14px;font:italic 13.33px Liberation Serif;line-height:13.33px;color:#1f1fa2;-webkit-text-stroke:0.2px #1f1fa2;">Ba6</div>
<div class="t" style="left:808.40px;top:382.14px;font:italic 13.33px Liberation Serif;line-height:13.33px;color:#1f1fa2;-webkit-text-stroke:0.2px #1f1fa2;">R5c6</div>
<div class="t" style="left:865.20px;top:382.14px;font:italic 13.33px Liberation Serif;line-height:13.33px;color:#1f1fa2;-webkit-text-stroke:0.2px #1f1fa2;">Re8</div>
<div class="t" style="left:808.40px;top:398.14px;font:italic 13.33px Liberation Serif;line-height:13.33px;color:#1f1fa2;-webkit-text-stroke:0.2px #1f1fa2;">Kf4</div>
<div class="t" style="left:865.20px;top:398.14px;font:italic 13.33px Liberation Serif;line-height:13.33px;color:#1f1fa2;-webkit-text-stroke:0.2px #1f1fa2;">Kg8</div>
<div class="t" style="left:808.40px;top:414.14px;font:italic 13.33px Liberation Serif;line-height:13.33px;color:#1f1fa2;-webkit-text-stroke:0.2px #1f1fa2;">h5</div>
<div class="t" style="left:865.20px;top:414.14px;font:italic 13.33px Liberation Serif;line-height:13.33px;color:#1f1fa2;-webkit-text-stroke:0.2px #1f1fa2;">Bf1</div>
<div class="t" style="left:808.40px;top:430.14px;font:italic 13.33px Liberation Serif;line-height:13.33px;color:#1f1fa2;-webkit-text-stroke:0.2px #1f1fa2;">g3</div>
<div class="t" style="left:865.20px;top:430.14px;font:italic 13.33px Liberation Serif;line-height:13.33px;color:#1f1fa2;-webkit-text-stroke:0.2px #1f1fa2;">Ba6</div>
<div class="t" style="left:808.40px;top:446.14px;font:italic 13.33px Liberation Serif;line-height:13.33px;color:#1f1fa2;-webkit-text-stroke:0.2px #1f1fa2;">Rf7</div>
<div class="t" style="left:865.20px;top:446.14px;font:italic 13.33px Liberation Serif;line-height:13.33px;color:#1f1fa2;-webkit-text-stroke:0.2px #1f1fa2;">Kh7</div>
<div class="t" style="left:808.40px;top:462.14px;font:italic 13.33px Liberation Serif;line-height:13.33px;color:#1f1fa2;-webkit-text-stroke:0.2px #1f1fa2;">Rcc7</div>
<div class="t" style="left:865.20px;top:462.14px;font:italic 13.33px Liberation Serif;line-height:13.33px;color:#1f1fa2;-webkit-text-stroke:0.2px #1f1fa2;">Rg8</div>
<div class="t" style="left:808.40px;top:478.14px;font:italic 13.33px Liberation Serif;line-height:13.33px;color:#1f1fa2;-webkit-text-stroke:0.2px #1f1fa2;">Nd7</div>
<div class="t" style="left:865.20px;top:478.14px;font:italic 13.33px Liberation Serif;line-height:13.33px;color:#1f1fa2;-webkit-text-stroke:0.2px #1f1fa2;">Kh8</div>
<div class="t" style="left:808.40px;top:494.14px;font:italic 13.33px Liberation Serif;line-height:13.33px;color:#1f1fa2;-webkit-text-stroke:0.2px #1f1fa2;">Nf6</div>
<div class="t" style="left:865.20px;top:494.14px;font:italic 13.33px Liberation Serif;line-height:13.33px;color:#1f1fa2;-webkit-text-stroke:0.2px #1f1fa2;">Rgf8</div>
<div class="t" style="left:808.40px;top:510.14px;font:italic 13.33px Liberation Serif;line-height:13.33px;color:#1f1fa2;-webkit-text-stroke:0.2px #1f1fa2;">Rxg7</div>
<div class="t" style="left:865.20px;top:510.14px;font:italic 13.33px Liberation Serif;line-height:13.33px;color:#1f1fa2;-webkit-text-stroke:0.2px #1f1fa2;">Rxf6</div>
<div class="t" style="left:808.40px;top:526.14px;font:italic 13.33px Liberation Serif;line-height:13.33px;color:#1f1fa2;-webkit-text-stroke:0.2px #1f1fa2;">Ke5</div>
<div class="t" style="left:644.60px;top:579.56px;font:9.5px Liberation Sans;line-height:9.5px;color:#8a8a8a;letter-spacing:0.6px;">&lt;&lt;</div>
<div class="t" style="left:976.00px;top:579.96px;font:9.5px Liberation Sans;line-height:9.5px;color:#111;letter-spacing:0.303px;-webkit-text-stroke:0.15px;">1 / 1</div>
<div class="t" style="left:1315.40px;top:579.56px;font:9.5px Liberation Sans;line-height:9.5px;color:#8a8a8a;letter-spacing:0.6px;">&gt;&gt;</div>
<div style="position:absolute;left:1351px;top:251px;width:15px;height:18px;background:#ededed;"></div>
<svg width="9" height="5" style="position:absolute;left:1354px;top:257.4px"><path d="M0.4,4.6 L4.4,0.4 L8.4,4.6 Z" fill="#1a1a1a"/></svg>
<div style="position:absolute;left:1351.5px;top:269.5px;width:13px;height:14px;box-sizing:border-box;border:1px solid #9a9a9a;border-radius:2px;background:linear-gradient(90deg,#ffffff 0%,#f0f0f0 45%,#cfcfcf 55%,#dcdcdc 100%);"></div>
<div style="position:absolute;left:1351px;top:685px;width:15px;height:17px;background:#ededed;"></div>
<svg width="9" height="5" style="position:absolute;left:1354.4px;top:691.6px"><path d="M0.4,0.4 L8.4,0.4 L4.4,4.6 Z" fill="#1a1a1a"/></svg>
<div style="position:absolute;left:623px;top:703.5px;width:743px;height:2px;background:#0a0a0a;"></div>
<div style="position:absolute;left:623px;top:705.5px;width:743px;height:23px;background:#fff;"></div>
<div style="position:absolute;left:0px;top:728px;width:1366px;height:40px;background:linear-gradient(180deg,#5d646e 0px,#2a303a 1px,#1a1f29 3px,#141922 14px,#10141c 26px,#0e1118 40px);"></div>
<div style="position:absolute;left:0px;top:729px;width:1366px;height:39px;background:linear-gradient(90deg,rgba(40,50,70,0.25) 0%,rgba(20,24,34,0) 20%,rgba(30,34,44,0.2) 60%,rgba(50,56,70,0.25) 75%,rgba(20,24,34,0.1) 100%);"></div>
<div style="position:absolute;left:246px;top:729px;width:58px;height:38px;box-sizing:border-box;border:1px solid rgba(158,160,164,0.9);border-radius:3px;background:linear-gradient(135deg,rgba(165,167,170,0.66) 0%,rgba(112,114,118,0.6) 30%,rgba(62,64,68,0.7) 46%,rgba(50,52,56,0.7) 100%);box-shadow:inset 0 0 0 1px rgba(255,255,255,0.12);"></div>
<div style="position:absolute;left:370px;top:729px;width:58px;height:38px;box-sizing:border-box;border:1px solid rgba(158,160,164,0.9);border-radius:3px;background:linear-gradient(135deg,rgba(165,167,170,0.66) 0%,rgba(112,114,118,0.6) 30%,rgba(62,64,68,0.7) 46%,rgba(50,52,56,0.7) 100%);box-shadow:inset 0 0 0 1px rgba(255,255,255,0.12);"></div>
<div style="position:absolute;left:432px;top:729px;width:58px;height:38px;box-sizing:border-box;border:1px solid rgba(158,160,164,0.9);border-radius:3px;background:linear-gradient(135deg,rgba(165,167,170,0.66) 0%,rgba(112,114,118,0.6) 30%,rgba(62,64,68,0.7) 46%,rgba(50,52,56,0.7) 100%);box-shadow:inset 0 0 0 1px rgba(255,255,255,0.12);"></div>
<div style="position:absolute;left:494px;top:729px;width:58px;height:38px;box-sizing:border-box;border:1px solid rgba(158,160,164,0.9);border-radius:3px;background:linear-gradient(135deg,rgba(165,167,170,0.66) 0%,rgba(112,114,118,0.6) 30%,rgba(62,64,68,0.7) 46%,rgba(50,52,56,0.7) 100%);box-shadow:inset 0 0 0 1px rgba(255,255,255,0.12);"></div>
<div style="position:absolute;left:556px;top:729px;width:58px;height:38px;box-sizing:border-box;border:1px solid rgba(158,160,164,0.9);border-radius:3px;background:linear-gradient(135deg,rgba(165,167,170,0.66) 0%,rgba(112,114,118,0.6) 30%,rgba(62,64,68,0.7) 46%,rgba(50,52,56,0.7) 100%);box-shadow:inset 0 0 0 1px rgba(255,255,255,0.12);"></div>
<div style="position:absolute;left:618px;top:729px;width:58px;height:38px;box-sizing:border-box;border:1px solid rgba(158,160,164,0.9);border-radius:3px;background:linear-gradient(135deg,rgba(165,167,170,0.66) 0%,rgba(112,114,118,0.6) 30%,rgba(62,64,68,0.7) 46%,rgba(50,52,56,0.7) 100%);box-shadow:inset 0 0 0 1px rgba(255,255,255,0.12);"></div>
<div style="position:absolute;left:742px;top:729px;width:58px;height:38px;box-sizing:border-box;border:1px solid rgba(158,160,164,0.9);border-radius:3px;background:linear-gradient(135deg,rgba(165,167,170,0.66) 0%,rgba(112,114,118,0.6) 30%,rgba(62,64,68,0.7) 46%,rgba(50,52,56,0.7) 100%);box-shadow:inset 0 0 0 1px rgba(255,255,255,0.12);"></div>
<div style="position:absolute;left:729px;top:729px;width:9px;height:38px;box-sizing:border-box;border:1px solid rgba(225,228,232,0.95);border-left:none;border-radius:0 3px 3px 0;background:rgba(90,95,102,0.5);"></div>
<div style="position:absolute;left:733px;top:729px;width:1px;height:38px;background:rgba(225,228,232,0.95);"></div>
<div style="position:absolute;left:680px;top:729px;width:50px;height:38px;box-sizing:border-box;border:1px solid rgba(225,228,232,0.95);border-radius:3px;background:linear-gradient(135deg,rgba(190,194,200,0.75) 0%,rgba(150,154,160,0.7) 35%,rgba(120,124,130,0.7) 50%,rgba(150,154,160,0.72) 100%);box-shadow:inset 0 0 0 1px rgba(255,255,255,0.12);"></div>
<div style="position:absolute;left:923px;top:729px;width:6px;height:38px;box-sizing:border-box;border:1px solid rgba(158,160,164,0.9);border-left:none;border-radius:0 3px 3px 0;background:rgba(90,95,102,0.5);"></div>
<div style="position:absolute;left:866px;top:729px;width:58px;height:38px;box-sizing:border-box;border:1px solid rgba(158,160,164,0.9);border-radius:3px;background:linear-gradient(135deg,rgba(165,167,170,0.66) 0%,rgba(112,114,118,0.6) 30%,rgba(62,64,68,0.7) 46%,rgba(50,52,56,0.7) 100%);box-shadow:inset 0 0 0 1px rgba(255,255,255,0.12);"></div>
<svg width="940" height="40" style="position:absolute;left:0;top:728px"><defs>
<radialGradient id="orb" cx="0.5" cy="0.35" r="0.7"><stop offset="0" stop-color="#6fc0f2"/><stop offset="0.45" stop-color="#2a86d6"/><stop offset="0.8" stop-color="#1558a8"/><stop offset="1" stop-color="#0c3a78"/></radialGradient>
<radialGradient id="orb2" cx="0.5" cy="1" r="0.6"><stop offset="0" stop-color="#30d0f8" stop-opacity="0.9"/><stop offset="1" stop-color="#30d0f8" stop-opacity="0"/></radialGradient>
<linearGradient id="npg" x1="0" y1="0" x2="1" y2="1"><stop offset="0" stop-color="#e8f4fc"/><stop offset="0.5" stop-color="#8cc0e6"/><stop offset="1" stop-color="#4a8cc0"/></linearGradient>
<linearGradient id="sg" x1="0" y1="0" x2="1" y2="1"><stop offset="0" stop-color="#ffffff"/><stop offset="0.5" stop-color="#c8d4dc"/><stop offset="1" stop-color="#eef2f6"/></linearGradient>
<linearGradient id="opg" x1="0" y1="0" x2="1" y2="1"><stop offset="0" stop-color="#ff3b30"/><stop offset="1" stop-color="#d0101c"/></linearGradient>
<linearGradient id="wdg" x1="0" y1="0" x2="1" y2="1"><stop offset="0" stop-color="#f4f9fe"/><stop offset="1" stop-color="#b8d4f0"/></linearGradient>
<linearGradient id="fld" x1="0" y1="0" x2="0" y2="1"><stop offset="0" stop-color="#fbe9a8"/><stop offset="1" stop-color="#e8c25c"/></linearGradient>
<linearGradient id="calc" x1="0" y1="0" x2="0" y2="1"><stop offset="0" stop-color="#dff0fc"/><stop offset="1" stop-color="#8cc4ee"/></linearGradient>
</defs><circle cx="27" cy="20" r="18.6" fill="#0a1420" opacity="0.6"/><circle cx="27" cy="20" r="17.6" fill="url(#orb)" stroke="#a8c8e8" stroke-width="0.9" stroke-opacity="0.7"/><circle cx="27" cy="20" r="17" fill="url(#orb2)"/><path d="M17.6,12.6 Q21.6,10 25.6,12.2 L24.2,19 Q20.6,17 16.2,19.4 Z" fill="#f0582c"/><path d="M27.4,12.8 Q31.6,15.4 36.6,12 L35,19.2 Q30.6,22 26,19.4 Z" fill="#8cc63c"/><path d="M15.8,21.2 Q20,18.8 23.8,20.8 L22.4,27.6 Q18.4,25.6 14.4,28 Z" fill="#3a9ce8"/><path d="M25.6,21.4 Q30,24 34.6,21 L33,28.4 Q28.6,31 24.2,28.4 Z" fill="#fcc81c"/><ellipse cx="27" cy="10" rx="13" ry="6.6" fill="#fff" opacity="0.22"/><path d="M85,7 L101.6,9.6 L94,32.6 L74,28 Z" fill="url(#npg)" stroke="#dfe9f2" stroke-width="0.8"/><path d="M85,7 L101.6,9.6 L100.8,11.8 L84.2,9.2 Z" fill="#888"/><path d="M94,32.6 L101.6,9.6 L102.6,27 Z" fill="#c08a50"/><path d="M94.2,32 L101,12 L100.4,28.6 Z" fill="#eef2f6"/><rect x="136" y="5" width="27" height="27" rx="2.6" fill="#eaf4e4" stroke="#2c8a2c" stroke-width="1.6"/><path d="M139.6,9.6 L144.6,9.6 L148.6,15.6 L152.6,9.6 L157.6,9.6 L151,18.6 L158,28 L152.8,28 L148.6,21.6 L144.4,28 L139.2,28 L146.2,18.6 Z" fill="#2f8f2f"/><path d="M148,19 L164,16 L165,32 L150,33 Z" fill="#f4faf0" stroke="#9ac89a" stroke-width="0.5"/><path d="M151,22.6 L162.6,21 M151.4,25.6 L163,24 M151.8,28.6 L163.4,27" stroke="#7cc070" stroke-width="1.6"/><path d="M200.6,5.4 L214.6,5.4 L220,11 L220,34.6 L200.6,34.6 Z" fill="#f4f4f4" stroke="#c8c8c8" stroke-width="0.6"/><path d="M214.6,5.4 L214.6,11 L220,11 Z" fill="#d8d8d8"/><rect x="200.2" y="7.4" width="1.7" height="1.9" fill="#222"/><rect x="200.2" y="10.8" width="1.7" height="1.9" fill="#222"/><rect x="200.2" y="14.2" width="1.7" height="1.9" fill="#222"/><rect x="200.2" y="17.6" width="1.7" height="1.9" fill="#222"/><rect x="200.2" y="21.0" width="1.7" height="1.9" fill="#222"/><rect x="200.2" y="24.4" width="1.7" height="1.9" fill="#222"/><rect x="200.2" y="27.8" width="1.7" height="1.9" fill="#222"/><rect x="200.2" y="31.2" width="1.7" height="1.9" fill="#222"/><path d="M203.6,9.0 L212,9.0" stroke="#cfcfcf" stroke-width="0.8"/><path d="M203.6,12.4 L212,12.4" stroke="#cfcfcf" stroke-width="0.8"/><path d="M203.6,15.8 L212,15.8" stroke="#cfcfcf" stroke-width="0.8"/><path d="M203.6,19.2 L212,19.2" stroke="#cfcfcf" stroke-width="0.8"/><path d="M203.6,22.6 L212,22.6" stroke="#cfcfcf" stroke-width="0.8"/><path d="M203.6,26.0 L212,26.0" stroke="#cfcfcf" stroke-width="0.8"/><path d="M203.6,29.4 L212,29.4" stroke="#cfcfcf" stroke-width="0.8"/><path d="M216,15.6 C211,15.6 211.4,18 211.4,20 L216.4,20 L216.4,21 L209.4,21 C206.6,21 206,24 206.6,26.6 C207.2,29 208.6,29.6 211,29.6 L211,26.6 C211,24.6 212.6,23.6 214.4,23.6 L219,23.6 C220.6,23.6 221.6,22.4 221.6,21 L221.6,18 C221.6,16.4 219.6,15.6 216,15.6 Z" fill="#3673a5"/><circle cx="213.6" cy="17.8" r="0.9" fill="#fff"/><path d="M219.6,36 C224.6,36 224.2,33.6 224.2,31.6 L219.2,31.6 L219.2,30.6 L226.2,30.6 C229,30.6 229.6,27.6 229,25 C228.4,22.6 227,22 224.6,22 L224.6,25 C224.6,27 223,28 221.2,28 L216.6,28 C215,28 214,29.2 214,30.6 L214,33.6 C214,35.2 216,36 219.6,36 Z" fill="#f7cb3f"/><circle cx="222" cy="33.8" r="0.9" fill="#fff"/><path d="M263.6,7.6 L279,12.6 L273.6,30 L258.6,25 Z" fill="#a4d88c" stroke="#7cb868" stroke-width="0.5"/><rect x="266" y="13.6" width="17" height="18" fill="#8cc4f0" stroke="#68a4d8" stroke-width="0.5"/><path d="M270.6,15.4 L286.2,9.8 L291.4,26.6 L276,32.6 Z" fill="#f8d860" stroke="#e0b838" stroke-width="0.6"/><path d="M322,12 L327,9 L327,28 L322,30 Z" fill="#b8bcc0"/><path d="M327,9.6 L350.6,6.6 L352,24.6 L328.6,28.4 Z" fill="#d8dce0" stroke="#9a9ea2" stroke-width="0.6"/><path d="M329,11.4 L349,8.8 L350,23.2 L330.2,26.4 Z" fill="#0a1a0a"/><path d="M331,24 L333,16 L335,22 L337,11 L339.4,21 L341.4,17 L343.4,22 L345.4,13 L347.6,21 L349,20" fill="none" stroke="#2cd82c" stroke-width="1.3"/><path d="M336,29 L346,27.4 L346.6,31 L337,32.6 Z" fill="#c4c8cc"/><ellipse cx="341.6" cy="33.6" rx="8.4" ry="2.4" fill="#d0d4d8"/><rect x="383.4" y="4.4" width="32" height="32" fill="#3f6c8a"/><rect x="383.4" y="4.4" width="32" height="32" fill="#7aa0b8" opacity="0.35"/><text x="399.4" y="34" font-family="Liberation Serif" font-weight="bold" font-size="42" fill="url(#sg)" text-anchor="middle" stroke="#8a9aa8" stroke-width="0.5">S</text><ellipse cx="461" cy="20" rx="15.2" ry="14.8" fill="url(#opg)"/><ellipse cx="461.4" cy="20" rx="8.2" ry="11.6" fill="#3c3e42" transform="rotate(6 461.4 20)"/><rect x="508" y="5" width="27" height="28" rx="2.6" fill="url(#wdg)" stroke="#2a62b8" stroke-width="1.6"/><path d="M511,10 L516,10 L518.4,21 L521.4,10 L525,10 L528,21 L530.4,10 L535,10 L530.6,27 L526,27 L523.2,16.6 L520.4,27 L515.6,27 Z" fill="#1f5ab4"/><path d="M520,24 L536,20 L537,32 L522,34 Z" fill="#f4f8fc" stroke="#a8c4e4" stroke-width="0.5"/><rect x="569.6" y="7.6" width="29.4" height="23.6" fill="#000" stroke="#b8b8b8" stroke-width="1"/><rect x="569.6" y="7.6" width="29.4" height="2.4" fill="#c8c8c8"/><text x="572.4" y="19.6" font-family="Liberation Mono" font-weight="bold" font-size="7.4" fill="#e8e8e8">C:\</text><path d="M588,20.4 L594.6,20.4" stroke="#e8e8e8" stroke-width="1.2"/><path d="M637,8 L653,6 L649,20 L633,22 Z" fill="#f4d060" stroke="#e0a810" stroke-width="1.6"/><path d="M645,16 L661,13 L657,31 L640,33 Z" fill="#f0ece0" stroke="#e0a810" stroke-width="1.6"/><rect x="644.2" y="9.6" width="5.4" height="20.6" fill="#1c4c9c" stroke="#f4f4f4" stroke-width="1"/><path d="M636,30 L648,34 L660,30" stroke="#e0a810" stroke-width="1.4" fill="none"/><rect x="694.0" y="3.6" width="6.2" height="6.2" fill="#1c9a8c"/><rect x="700.2" y="3.6" width="6.2" height="6.2" fill="#0a4a44"/><rect x="706.4" y="3.6" width="6.2" height="6.2" fill="#1c9a8c"/><rect x="694.0" y="9.8" width="6.2" height="6.2" fill="#0a4a44"/><rect x="700.2" y="9.8" width="6.2" height="6.2" fill="#1c9a8c"/><rect x="706.4" y="9.8" width="6.2" height="6.2" fill="#0a4a44"/><path d="M706.4,3.6 L712.6,3.6 L716.6,9 L716.6,34 L713,30 L713,16 L706.4,16 Z" fill="#1c9a8c"/><path d="M712.6,9.8 L716.6,15 L716.6,22 L712.6,16 Z" fill="#0a4a44"/><path d="M713,22 L716.6,27 L716.6,34 L713,30 Z" fill="#0a5a52"/><path d="M770,4.4 L788,4.4 L788,30.6 L756,30.6 Z" fill="#f0c418"/><path d="M756,30.6 L788,30.6 L788,33.6 L757,33.6 Z" fill="#a8482c"/><path d="M772,7 C782,14 776,22 766,30 L762,40 L758,40 L762,29 C772,21 776,14 768,8 Z" fill="#1c2c8c"/><path d="M780,7 C790,15 784,23 774,31 L771,40 L767,40 L770,30 C780,22 784,15 776,8 Z" fill="#1c2c8c"/><rect x="821.4" y="5.4" width="22" height="29.6" rx="2" fill="url(#calc)" stroke="#4a94d8" stroke-width="1.2"/><rect x="824" y="8.6" width="16.8" height="7.4" fill="#e4f0f8" stroke="#88a8c0" stroke-width="0.6"/><rect x="824" y="8" width="16.8" height="1.6" fill="#f0c860"/><text x="839.6" y="15" font-family="Liberation Mono" font-size="7" fill="#345" text-anchor="end">0</text><rect x="824.2" y="19.0" width="3.1" height="2.7" fill="#f6fafc" stroke="#9cc" stroke-width="0.3"/><rect x="824.2" y="22.8" width="3.1" height="2.7" fill="#f6fafc" stroke="#9cc" stroke-width="0.3"/><rect x="824.2" y="26.6" width="3.1" height="2.7" fill="#f6fafc" stroke="#9cc" stroke-width="0.3"/><rect x="824.2" y="30.4" width="3.1" height="2.7" fill="#f6fafc" stroke="#9cc" stroke-width="0.3"/><rect x="828.5" y="19.0" width="3.1" height="2.7" fill="#f6fafc" stroke="#9cc" stroke-width="0.3"/><rect x="828.5" y="22.8" width="3.1" height="2.7" fill="#f6fafc" stroke="#9cc" stroke-width="0.3"/><rect x="828.5" y="26.6" width="3.1" height="2.7" fill="#f6fafc" stroke="#9cc" stroke-width="0.3"/><rect x="828.5" y="30.4" width="3.1" height="2.7" fill="#f6fafc" stroke="#9cc" stroke-width="0.3"/><rect x="832.8" y="19.0" width="3.1" height="2.7" fill="#f6fafc" stroke="#9cc" stroke-width="0.3"/><rect x="832.8" y="22.8" width="3.1" height="2.7" fill="#f6fafc" stroke="#9cc" stroke-width="0.3"/><rect x="832.8" y="26.6" width="3.1" height="2.7" fill="#f6fafc" stroke="#9cc" stroke-width="0.3"/><rect x="832.8" y="30.4" width="3.1" height="2.7" fill="#f6fafc" stroke="#9cc" stroke-width="0.3"/><rect x="837.1" y="19.0" width="3.1" height="2.7" fill="#f6fafc" stroke="#9cc" stroke-width="0.3"/><rect x="837.1" y="22.8" width="3.1" height="2.7" fill="#f6fafc" stroke="#9cc" stroke-width="0.3"/><rect x="837.1" y="26.6" width="3.1" height="2.7" fill="#f6fafc" stroke="#9cc" stroke-width="0.3"/><rect x="837.1" y="30.4" width="3.1" height="2.7" fill="#f6fafc" stroke="#9cc" stroke-width="0.3"/><rect x="837.1" y="26.6" width="3.1" height="6.5" fill="#f0a030"/><path d="M879,10 L879,33 L909,33 L909,10 L896,10 L893.6,7.4 L881.4,7.4 Z" fill="url(#fld)" stroke="#c89c3c" stroke-width="0.7"/><path d="M883,12.6 L905,12.6 L905,16 L883,16 Z" fill="#fffbe8"/><rect x="881.4" y="7" width="3.4" height="2.4" fill="#2ca02c"/><rect x="889" y="9.4" width="3.4" height="2.4" fill="#d82c1c"/><rect x="898" y="11.4" width="3.4" height="2.4" fill="#1c8cd8"/><path d="M880,16 L908,16 L908,33 L880,33 Z" fill="#f4dc8c" opacity="0.8"/><path d="M884,24 L904,24 L906,34.6 L900.6,34.6 L899.6,29 L888.4,29 L887.4,34.6 L882,34.6 Z" fill="#7cc4f4" stroke="#2c7cc8" stroke-width="0.8" opacity="0.95"/></svg>
<svg width="12" height="8" style="position:absolute;left:1234px;top:745px"><path d="M1,6.6 L5.8,1.4 L10.6,6.6 Z" fill="#f2f2f2"/></svg>
<svg width="20" height="18" style="position:absolute;left:1256px;top:740px"><path d="M2.6,1 L2.6,5 M6,1 L6,5" stroke="#fff" stroke-width="1.3"/><rect x="1.4" y="4.4" width="6" height="4.6" fill="#fff"/><path d="M4.4,9 L4.4,14.6 L9,14.6" stroke="#fff" stroke-width="1.2" fill="none"/><path d="M7,3.4 L15,3.4 L15,9" stroke="#e8e8e8" stroke-width="1.1" fill="none"/><path d="M12.6,8 L17.6,16.4 L7.6,16.4 Z" fill="#f6c21c" stroke="#b88a08" stroke-width="0.6"/><path d="M12.6,10.6 L12.6,13.6 M12.6,14.6 L12.6,15.6" stroke="#222" stroke-width="1.2"/></svg>
<div class="t" style="left:1294.20px;top:736.09px;font:11px Liberation Sans;line-height:11px;color:#fff;letter-spacing:0.234px;">4:17 PM</div>
<div class="t" style="left:1289.50px;top:751.09px;font:11px Liberation Sans;line-height:11px;color:#fff;letter-spacing:0.340px;">8/16/2016</div>
<div style="position:absolute;left:1351px;top:729px;width:15px;height:39px;box-sizing:border-box;border-left:1px solid #646a74;background:linear-gradient(90deg,rgba(120,126,136,0.35),rgba(60,66,76,0.35));box-shadow:inset 1px 0 0 rgba(0,0,0,0.6);"></div>
</body></html>
